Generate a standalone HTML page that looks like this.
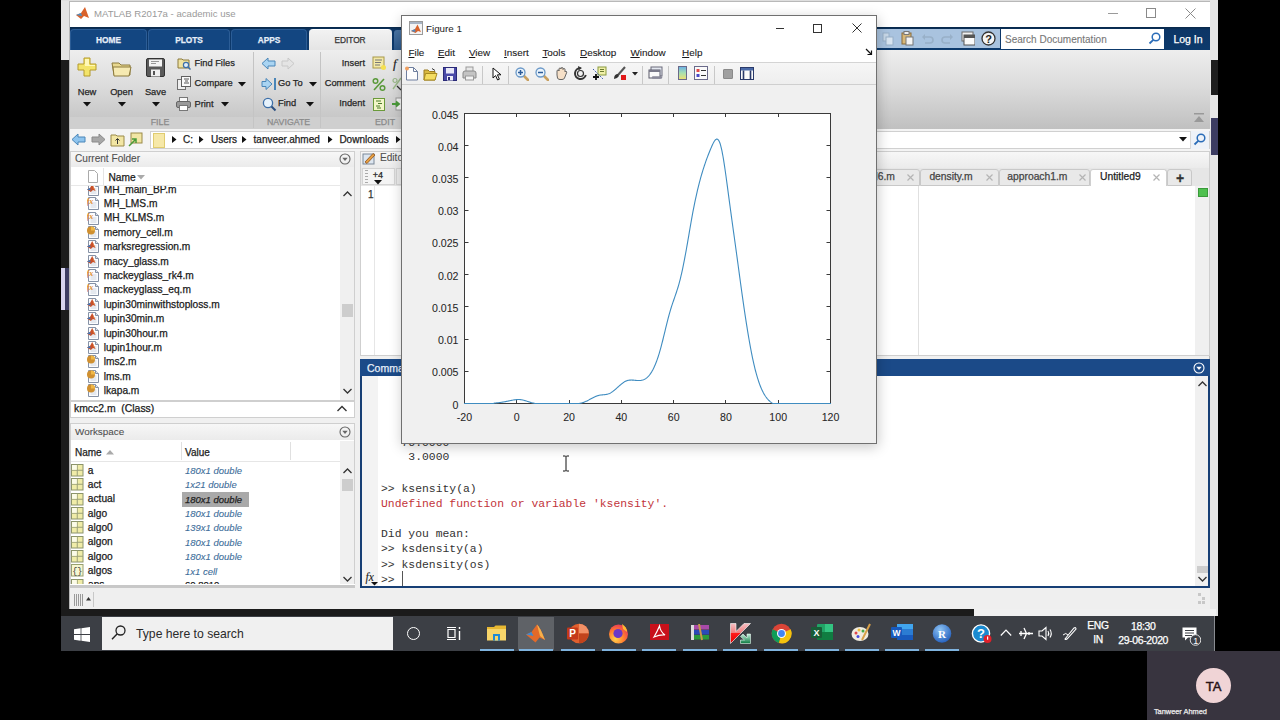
<!DOCTYPE html>
<html><head><meta charset="utf-8">
<style>
*{margin:0;padding:0;box-sizing:border-box}
html,body{width:1280px;height:720px;overflow:hidden;background:#000;font-family:"Liberation Sans",sans-serif;}
.a{position:absolute}
.t{position:absolute;white-space:nowrap;line-height:1;-webkit-text-stroke:0.25px currentColor}
</style></head><body>
<div class="a" style="left:0px;top:0px;width:1280px;height:720px;background:#000"></div>
<div class="a" style="left:61px;top:0px;width:8px;height:60px;background:#e4e4e4"></div>
<div class="a" style="left:61px;top:0px;width:1157px;height:1px;background:#dedede"></div>
<div class="a" style="left:61px;top:60px;width:8px;height:556px;background:#1c1c1c"></div>
<div class="a" style="left:61px;top:268px;width:4px;height:42px;background:#d6d3ee"></div>
<div class="a" style="left:65px;top:268px;width:4px;height:42px;background:#3c3c62"></div>
<div class="a" style="left:1210px;top:0px;width:8px;height:616px;background:#e6e6e6"></div>
<div class="a" style="left:1211px;top:60px;width:7px;height:35px;background:#1e1e1e"></div>
<div class="a" style="left:1211px;top:118px;width:7px;height:37px;background:#3c3c62"></div>
<div class="a" style="left:69px;top:1px;width:1141px;height:610px;background:#f0f0f0;border:1px solid #b8b8b8"></div>
<div class="a" style="left:70px;top:2px;width:1140px;height:25px;background:#fff"></div>
<svg class="a" style="left:76px;top:7px" width="13" height="13" viewBox="0 0 13 13"><path d="M0 8 L5 6 L9 0 L13 11 L8 9 L5 12 Z" fill="#d9622b"/><path d="M0 8 L5 6 L6 9 Z" fill="#4a90c8"/></svg>
<div class="t" style="left:94px;top:9.20px;font-size:9.6px;color:#9a9a9a;-webkit-text-stroke:0">MATLAB R2017a - academic use</div>
<div class="a" style="left:1108px;top:13px;width:10px;height:1px;background:#9a9a9a"></div>
<div class="a" style="left:1146px;top:8px;width:10px;height:10px;border:1px solid #8a8a8a"></div>
<svg class="a" style="left:1185px;top:8px" width="11" height="11" viewBox="0 0 11 11"><path d="M0.5 0.5L10.5 10.5M10.5 0.5L0.5 10.5" stroke="#8a8a8a" stroke-width="1"/></svg>
<div class="a" style="left:70px;top:27px;width:1140px;height:23px;background:linear-gradient(#082848 0,#0c3566 3px,#0d3a6c 100%)"></div>
<div class="a" style="left:70px;top:29px;width:77px;height:21px;background:#134681;border:1px solid #2c5d96;border-bottom:none;border-radius:4px 4px 0 0"></div>
<div class="t" style="left:-191.5px;width:600px;text-align:center;top:35.85px;font-size:8.3px;color:#e6eef8;font-weight:bold">HOME</div>
<div class="a" style="left:148px;top:29px;width:82px;height:21px;background:#134681;border:1px solid #2c5d96;border-bottom:none;border-radius:4px 4px 0 0"></div>
<div class="t" style="left:-111.0px;width:600px;text-align:center;top:35.85px;font-size:8.3px;color:#e6eef8;font-weight:bold">PLOTS</div>
<div class="a" style="left:231px;top:29px;width:76px;height:21px;background:#134681;border:1px solid #2c5d96;border-bottom:none;border-radius:4px 4px 0 0"></div>
<div class="t" style="left:-31.0px;width:600px;text-align:center;top:35.85px;font-size:8.3px;color:#e6eef8;font-weight:bold">APPS</div>
<div class="a" style="left:309px;top:29px;width:83px;height:22px;background:linear-gradient(#f2f2f2,#e4e4e4);border-radius:4px 4px 0 0;border-top:1px solid #fff"></div>
<div class="t" style="left:50px;width:600px;text-align:center;top:35.55px;font-size:8.3px;color:#333;">EDITOR</div>
<div class="a" style="left:394px;top:30px;width:10px;height:20px;background:linear-gradient(#4a74a4,#2a5688);border-radius:3px 0 0 0"></div>
<div class="a" style="left:870px;top:29px;width:130px;height:19px;background:#a9c3df"></div>
<div class="a" style="left:1001px;top:29px;width:163px;height:20px;background:#fff"></div>
<div class="t" style="left:1005px;top:34.50px;font-size:10px;color:#777;-webkit-text-stroke:0.1px">Search Documentation</div>
<svg class="a" style="left:1148px;top:32px" width="13" height="13" viewBox="0 0 13 13"><circle cx="8" cy="5" r="3.8" fill="none" stroke="#2a6cb8" stroke-width="1.5"/><path d="M5.3 7.8L1.5 11.5" stroke="#2a6cb8" stroke-width="1.8"/></svg>
<div class="t" style="left:888px;width:600px;text-align:center;top:33.75px;font-size:10.5px;color:#fff;">Log In</div>
<div class="a" style="left:70px;top:50px;width:1140px;height:79px;background:linear-gradient(#eeeeee 0%,#dcdcdc 45%,#c0c0c0 100%)"></div>
<div class="a" style="left:70px;top:117px;width:335px;height:12px;background:#cfcfcf"></div>
<div class="a" style="left:253px;top:52px;width:1px;height:76px;background:#c4c4c4"></div>
<div class="a" style="left:320px;top:52px;width:1px;height:76px;background:#c4c4c4"></div>
<div class="a" style="left:70px;top:129px;width:1140px;height:22px;background:#f4f4f4"></div>
<div class="a" style="left:150px;top:131px;width:1060px;height:18px;background:#fff;border:1px solid #d0d0d0"></div>
<div class="a" style="left:70px;top:151px;width:285px;height:250px;background:#fff;border:1px solid #cfcfcf"></div>
<div class="a" style="left:71px;top:152px;width:283px;height:15px;background:linear-gradient(#f7f7f7,#ebebeb)"></div>
<div class="t" style="left:75px;top:153.95px;font-size:10.1px;color:#505050;-webkit-text-stroke:0.1px">Current Folder</div>
<div class="a" style="left:340px;top:167px;width:14px;height:233px;background:#f0f0f0"></div>
<div class="t" style="left:103.7px;top:184.70px;font-size:10.2px;color:#1a1a1a;">MH_main_BP.m</div>
<svg class="a" style="left:87px;top:183px" width="13" height="13" viewBox="0 0 13 13"><path d="M1.5 0.5H8.5L11.5 3.5V12.5H1.5Z" fill="#fbfcfe" stroke="#8692a6"/><path d="M8.5 0.5V3.5H11.5" fill="#dde2ea" stroke="#8692a6"/><path d="M3.5 6H9.5M3.5 8H9.5M3.5 10H9.5" stroke="#c4ccd8" stroke-width=".8"/><path d="M0 6.5L3 5L5.2 1L8.5 8L6 7L3.8 9Z" fill="#c8502a"/><path d="M5.2 1L8.5 8L6.5 5.5Z" fill="#e8884a"/><path d="M0 6.5L3 5L3.8 7.5Z" fill="#3a78c0"/></svg>
<div class="t" style="left:103.7px;top:199.08px;font-size:10.2px;color:#1a1a1a;">MH_LMS.m</div>
<svg class="a" style="left:87px;top:197px" width="13" height="13" viewBox="0 0 13 13"><path d="M1.5 0.5H8.5L11.5 3.5V12.5H1.5Z" fill="#fbfcfe" stroke="#8692a6"/><path d="M8.5 0.5V3.5H11.5" fill="#dde2ea" stroke="#8692a6"/><path d="M3.5 6H9.5M3.5 8H9.5M3.5 10H9.5" stroke="#c4ccd8" stroke-width=".8"/><text x="-0.5" y="6.5" font-family="Liberation Serif" font-style="italic" font-weight="bold" font-size="8" fill="#e2902a">fx</text></svg>
<div class="t" style="left:103.7px;top:213.46px;font-size:10.2px;color:#1a1a1a;">MH_KLMS.m</div>
<svg class="a" style="left:87px;top:212px" width="13" height="13" viewBox="0 0 13 13"><path d="M1.5 0.5H8.5L11.5 3.5V12.5H1.5Z" fill="#fbfcfe" stroke="#8692a6"/><path d="M8.5 0.5V3.5H11.5" fill="#dde2ea" stroke="#8692a6"/><path d="M3.5 6H9.5M3.5 8H9.5M3.5 10H9.5" stroke="#c4ccd8" stroke-width=".8"/><text x="-0.5" y="6.5" font-family="Liberation Serif" font-style="italic" font-weight="bold" font-size="8" fill="#e2902a">fx</text></svg>
<div class="t" style="left:103.7px;top:227.84px;font-size:10.2px;color:#1a1a1a;">memory_cell.m</div>
<svg class="a" style="left:87px;top:226px" width="13" height="13" viewBox="0 0 13 13"><path d="M1.5 0.5H8.5L11.5 3.5V12.5H1.5Z" fill="#fbfcfe" stroke="#8692a6"/><path d="M8.5 0.5V3.5H11.5" fill="#dde2ea" stroke="#8692a6"/><path d="M3.5 6H9.5M3.5 8H9.5M3.5 10H9.5" stroke="#c4ccd8" stroke-width=".8"/><circle cx="4" cy="4.5" r="4" fill="#d09030"/><path d="M4 0.5A4 4 0 0 1 8 4.5L4 4.5Z" fill="#f0b848"/></svg>
<div class="t" style="left:103.7px;top:242.22px;font-size:10.2px;color:#1a1a1a;">marksregression.m</div>
<svg class="a" style="left:87px;top:240px" width="13" height="13" viewBox="0 0 13 13"><path d="M1.5 0.5H8.5L11.5 3.5V12.5H1.5Z" fill="#fbfcfe" stroke="#8692a6"/><path d="M8.5 0.5V3.5H11.5" fill="#dde2ea" stroke="#8692a6"/><path d="M3.5 6H9.5M3.5 8H9.5M3.5 10H9.5" stroke="#c4ccd8" stroke-width=".8"/><path d="M0 6.5L3 5L5.2 1L8.5 8L6 7L3.8 9Z" fill="#c8502a"/><path d="M5.2 1L8.5 8L6.5 5.5Z" fill="#e8884a"/><path d="M0 6.5L3 5L3.8 7.5Z" fill="#3a78c0"/></svg>
<div class="t" style="left:103.7px;top:256.60px;font-size:10.2px;color:#1a1a1a;">macy_glass.m</div>
<svg class="a" style="left:87px;top:255px" width="13" height="13" viewBox="0 0 13 13"><path d="M1.5 0.5H8.5L11.5 3.5V12.5H1.5Z" fill="#fbfcfe" stroke="#8692a6"/><path d="M8.5 0.5V3.5H11.5" fill="#dde2ea" stroke="#8692a6"/><path d="M3.5 6H9.5M3.5 8H9.5M3.5 10H9.5" stroke="#c4ccd8" stroke-width=".8"/><path d="M0 6.5L3 5L5.2 1L8.5 8L6 7L3.8 9Z" fill="#c8502a"/><path d="M5.2 1L8.5 8L6.5 5.5Z" fill="#e8884a"/><path d="M0 6.5L3 5L3.8 7.5Z" fill="#3a78c0"/></svg>
<div class="t" style="left:103.7px;top:270.98px;font-size:10.2px;color:#1a1a1a;">mackeyglass_rk4.m</div>
<svg class="a" style="left:87px;top:269px" width="13" height="13" viewBox="0 0 13 13"><path d="M1.5 0.5H8.5L11.5 3.5V12.5H1.5Z" fill="#fbfcfe" stroke="#8692a6"/><path d="M8.5 0.5V3.5H11.5" fill="#dde2ea" stroke="#8692a6"/><path d="M3.5 6H9.5M3.5 8H9.5M3.5 10H9.5" stroke="#c4ccd8" stroke-width=".8"/><text x="-0.5" y="6.5" font-family="Liberation Serif" font-style="italic" font-weight="bold" font-size="8" fill="#e2902a">fx</text></svg>
<div class="t" style="left:103.7px;top:285.36px;font-size:10.2px;color:#1a1a1a;">mackeyglass_eq.m</div>
<svg class="a" style="left:87px;top:283px" width="13" height="13" viewBox="0 0 13 13"><path d="M1.5 0.5H8.5L11.5 3.5V12.5H1.5Z" fill="#fbfcfe" stroke="#8692a6"/><path d="M8.5 0.5V3.5H11.5" fill="#dde2ea" stroke="#8692a6"/><path d="M3.5 6H9.5M3.5 8H9.5M3.5 10H9.5" stroke="#c4ccd8" stroke-width=".8"/><text x="-0.5" y="6.5" font-family="Liberation Serif" font-style="italic" font-weight="bold" font-size="8" fill="#e2902a">fx</text></svg>
<div class="t" style="left:103.7px;top:299.74px;font-size:10.2px;color:#1a1a1a;">lupin30minwithstoploss.m</div>
<svg class="a" style="left:87px;top:298px" width="13" height="13" viewBox="0 0 13 13"><path d="M1.5 0.5H8.5L11.5 3.5V12.5H1.5Z" fill="#fbfcfe" stroke="#8692a6"/><path d="M8.5 0.5V3.5H11.5" fill="#dde2ea" stroke="#8692a6"/><path d="M3.5 6H9.5M3.5 8H9.5M3.5 10H9.5" stroke="#c4ccd8" stroke-width=".8"/><path d="M0 6.5L3 5L5.2 1L8.5 8L6 7L3.8 9Z" fill="#c8502a"/><path d="M5.2 1L8.5 8L6.5 5.5Z" fill="#e8884a"/><path d="M0 6.5L3 5L3.8 7.5Z" fill="#3a78c0"/></svg>
<div class="t" style="left:103.7px;top:314.12px;font-size:10.2px;color:#1a1a1a;">lupin30min.m</div>
<svg class="a" style="left:87px;top:312px" width="13" height="13" viewBox="0 0 13 13"><path d="M1.5 0.5H8.5L11.5 3.5V12.5H1.5Z" fill="#fbfcfe" stroke="#8692a6"/><path d="M8.5 0.5V3.5H11.5" fill="#dde2ea" stroke="#8692a6"/><path d="M3.5 6H9.5M3.5 8H9.5M3.5 10H9.5" stroke="#c4ccd8" stroke-width=".8"/><path d="M0 6.5L3 5L5.2 1L8.5 8L6 7L3.8 9Z" fill="#c8502a"/><path d="M5.2 1L8.5 8L6.5 5.5Z" fill="#e8884a"/><path d="M0 6.5L3 5L3.8 7.5Z" fill="#3a78c0"/></svg>
<div class="t" style="left:103.7px;top:328.50px;font-size:10.2px;color:#1a1a1a;">lupin30hour.m</div>
<svg class="a" style="left:87px;top:327px" width="13" height="13" viewBox="0 0 13 13"><path d="M1.5 0.5H8.5L11.5 3.5V12.5H1.5Z" fill="#fbfcfe" stroke="#8692a6"/><path d="M8.5 0.5V3.5H11.5" fill="#dde2ea" stroke="#8692a6"/><path d="M3.5 6H9.5M3.5 8H9.5M3.5 10H9.5" stroke="#c4ccd8" stroke-width=".8"/><path d="M0 6.5L3 5L5.2 1L8.5 8L6 7L3.8 9Z" fill="#c8502a"/><path d="M5.2 1L8.5 8L6.5 5.5Z" fill="#e8884a"/><path d="M0 6.5L3 5L3.8 7.5Z" fill="#3a78c0"/></svg>
<div class="t" style="left:103.7px;top:342.88px;font-size:10.2px;color:#1a1a1a;">lupin1hour.m</div>
<svg class="a" style="left:87px;top:341px" width="13" height="13" viewBox="0 0 13 13"><path d="M1.5 0.5H8.5L11.5 3.5V12.5H1.5Z" fill="#fbfcfe" stroke="#8692a6"/><path d="M8.5 0.5V3.5H11.5" fill="#dde2ea" stroke="#8692a6"/><path d="M3.5 6H9.5M3.5 8H9.5M3.5 10H9.5" stroke="#c4ccd8" stroke-width=".8"/><path d="M0 6.5L3 5L5.2 1L8.5 8L6 7L3.8 9Z" fill="#c8502a"/><path d="M5.2 1L8.5 8L6.5 5.5Z" fill="#e8884a"/><path d="M0 6.5L3 5L3.8 7.5Z" fill="#3a78c0"/></svg>
<div class="t" style="left:103.7px;top:357.26px;font-size:10.2px;color:#1a1a1a;">lms2.m</div>
<svg class="a" style="left:87px;top:355px" width="13" height="13" viewBox="0 0 13 13"><path d="M1.5 0.5H8.5L11.5 3.5V12.5H1.5Z" fill="#fbfcfe" stroke="#8692a6"/><path d="M8.5 0.5V3.5H11.5" fill="#dde2ea" stroke="#8692a6"/><path d="M3.5 6H9.5M3.5 8H9.5M3.5 10H9.5" stroke="#c4ccd8" stroke-width=".8"/><circle cx="4" cy="4.5" r="4" fill="#d09030"/><path d="M4 0.5A4 4 0 0 1 8 4.5L4 4.5Z" fill="#f0b848"/></svg>
<div class="t" style="left:103.7px;top:371.64px;font-size:10.2px;color:#1a1a1a;">lms.m</div>
<svg class="a" style="left:87px;top:370px" width="13" height="13" viewBox="0 0 13 13"><path d="M1.5 0.5H8.5L11.5 3.5V12.5H1.5Z" fill="#fbfcfe" stroke="#8692a6"/><path d="M8.5 0.5V3.5H11.5" fill="#dde2ea" stroke="#8692a6"/><path d="M3.5 6H9.5M3.5 8H9.5M3.5 10H9.5" stroke="#c4ccd8" stroke-width=".8"/><circle cx="4" cy="4.5" r="4" fill="#d09030"/><path d="M4 0.5A4 4 0 0 1 8 4.5L4 4.5Z" fill="#f0b848"/></svg>
<div class="t" style="left:103.7px;top:386.02px;font-size:10.2px;color:#1a1a1a;">lkapa.m</div>
<svg class="a" style="left:87px;top:384px" width="13" height="13" viewBox="0 0 13 13"><path d="M1.5 0.5H8.5L11.5 3.5V12.5H1.5Z" fill="#fbfcfe" stroke="#8692a6"/><path d="M8.5 0.5V3.5H11.5" fill="#dde2ea" stroke="#8692a6"/><path d="M3.5 6H9.5M3.5 8H9.5M3.5 10H9.5" stroke="#c4ccd8" stroke-width=".8"/><circle cx="4" cy="4.5" r="4" fill="#d09030"/><path d="M4 0.5A4 4 0 0 1 8 4.5L4 4.5Z" fill="#f0b848"/></svg>
<div class="a" style="left:71px;top:167px;width:269px;height:19px;background:#fff;border-bottom:1px solid #e8e8e8"></div>
<div class="a" style="left:103px;top:168px;width:1px;height:17px;background:#e4e4e4"></div>
<div class="t" style="left:108.5px;top:172.65px;font-size:10.2px;color:#1a1a1a;">Name</div>
<div class="a" style="left:70px;top:401px;width:285px;height:17px;background:#fff;border:1px solid #cfcfcf"></div>
<div class="t" style="left:74px;top:404.20px;font-size:10.4px;color:#1a1a1a;">kmcc2.m&nbsp; (Class)</div>
<div class="a" style="left:70px;top:423px;width:285px;height:164px;background:#fff;border:1px solid #cfcfcf"></div>
<div class="a" style="left:71px;top:424px;width:283px;height:16px;background:linear-gradient(#f7f7f7,#ebebeb)"></div>
<div class="t" style="left:75px;top:427.05px;font-size:9.9px;color:#505050;-webkit-text-stroke:0.1px">Workspace</div>
<div class="a" style="left:71px;top:440px;width:283px;height:22px;background:#fff;border-bottom:1px solid #e6e6e6"></div>
<div class="t" style="left:75px;top:448.00px;font-size:10px;color:#222;">Name</div>
<div class="t" style="left:185px;top:448.00px;font-size:10px;color:#222;">Value</div>
<div class="a" style="left:181px;top:442px;width:1px;height:18px;background:#e0e0e0"></div>
<div class="a" style="left:290px;top:442px;width:1px;height:18px;background:#e0e0e0"></div>
<div class="t" style="left:87.8px;top:465.70px;font-size:10.2px;color:#1a1a1a;">a</div>
<svg class="a" style="left:71px;top:464px" width="13" height="13" viewBox="0 0 13 13"><rect x="0.5" y="0.5" width="11.5" height="11.5" fill="#f0eca8" stroke="#8c946a"/><path d="M6.25 0.5V12M0.5 6.25H12" stroke="#9aa078" stroke-width="1"/><rect x="1" y="1" width="4.8" height="4.8" fill="#fbfbe8"/></svg>
<div class="t" style="left:185px;top:466.05px;font-size:9.5px;color:#3d6d9a;font-style:italic;-webkit-text-stroke:0.1px">180x1 double</div>
<div class="t" style="left:87.8px;top:480.05px;font-size:10.2px;color:#1a1a1a;">act</div>
<svg class="a" style="left:71px;top:478px" width="13" height="13" viewBox="0 0 13 13"><rect x="0.5" y="0.5" width="11.5" height="11.5" fill="#f0eca8" stroke="#8c946a"/><path d="M6.25 0.5V12M0.5 6.25H12" stroke="#9aa078" stroke-width="1"/><rect x="1" y="1" width="4.8" height="4.8" fill="#fbfbe8"/></svg>
<div class="t" style="left:185px;top:480.40px;font-size:9.5px;color:#3d6d9a;font-style:italic;-webkit-text-stroke:0.1px">1x21 double</div>
<div class="t" style="left:87.8px;top:494.40px;font-size:10.2px;color:#1a1a1a;">actual</div>
<svg class="a" style="left:71px;top:493px" width="13" height="13" viewBox="0 0 13 13"><rect x="0.5" y="0.5" width="11.5" height="11.5" fill="#f0eca8" stroke="#8c946a"/><path d="M6.25 0.5V12M0.5 6.25H12" stroke="#9aa078" stroke-width="1"/><rect x="1" y="1" width="4.8" height="4.8" fill="#fbfbe8"/></svg>
<div class="a" style="left:182px;top:492px;width:67px;height:15px;background:#a9a9a9"></div>
<div class="t" style="left:185px;top:494.75px;font-size:9.5px;color:#222;font-style:italic">180x1 double</div>
<div class="t" style="left:87.8px;top:508.75px;font-size:10.2px;color:#1a1a1a;">algo</div>
<svg class="a" style="left:71px;top:507px" width="13" height="13" viewBox="0 0 13 13"><rect x="0.5" y="0.5" width="11.5" height="11.5" fill="#f0eca8" stroke="#8c946a"/><path d="M6.25 0.5V12M0.5 6.25H12" stroke="#9aa078" stroke-width="1"/><rect x="1" y="1" width="4.8" height="4.8" fill="#fbfbe8"/></svg>
<div class="t" style="left:185px;top:509.10px;font-size:9.5px;color:#3d6d9a;font-style:italic;-webkit-text-stroke:0.1px">180x1 double</div>
<div class="t" style="left:87.8px;top:523.10px;font-size:10.2px;color:#1a1a1a;">algo0</div>
<svg class="a" style="left:71px;top:521px" width="13" height="13" viewBox="0 0 13 13"><rect x="0.5" y="0.5" width="11.5" height="11.5" fill="#f0eca8" stroke="#8c946a"/><path d="M6.25 0.5V12M0.5 6.25H12" stroke="#9aa078" stroke-width="1"/><rect x="1" y="1" width="4.8" height="4.8" fill="#fbfbe8"/></svg>
<div class="t" style="left:185px;top:523.45px;font-size:9.5px;color:#3d6d9a;font-style:italic;-webkit-text-stroke:0.1px">139x1 double</div>
<div class="t" style="left:87.8px;top:537.45px;font-size:10.2px;color:#1a1a1a;">algon</div>
<svg class="a" style="left:71px;top:536px" width="13" height="13" viewBox="0 0 13 13"><rect x="0.5" y="0.5" width="11.5" height="11.5" fill="#f0eca8" stroke="#8c946a"/><path d="M6.25 0.5V12M0.5 6.25H12" stroke="#9aa078" stroke-width="1"/><rect x="1" y="1" width="4.8" height="4.8" fill="#fbfbe8"/></svg>
<div class="t" style="left:185px;top:537.80px;font-size:9.5px;color:#3d6d9a;font-style:italic;-webkit-text-stroke:0.1px">180x1 double</div>
<div class="t" style="left:87.8px;top:551.80px;font-size:10.2px;color:#1a1a1a;">algoo</div>
<svg class="a" style="left:71px;top:550px" width="13" height="13" viewBox="0 0 13 13"><rect x="0.5" y="0.5" width="11.5" height="11.5" fill="#f0eca8" stroke="#8c946a"/><path d="M6.25 0.5V12M0.5 6.25H12" stroke="#9aa078" stroke-width="1"/><rect x="1" y="1" width="4.8" height="4.8" fill="#fbfbe8"/></svg>
<div class="t" style="left:185px;top:552.15px;font-size:9.5px;color:#3d6d9a;font-style:italic;-webkit-text-stroke:0.1px">180x1 double</div>
<div class="t" style="left:87.8px;top:566.15px;font-size:10.2px;color:#1a1a1a;">algos</div>
<svg class="a" style="left:71px;top:564px" width="13" height="13" viewBox="0 0 13 13"><rect x="0.5" y="0.5" width="11.5" height="11.5" fill="#f6f6d0" stroke="#98a070"/><text x="6.25" y="9.5" text-anchor="middle" font-family="Liberation Mono" font-size="8.5" fill="#333">{}</text></svg>
<div class="t" style="left:185px;top:566.50px;font-size:9.5px;color:#3d6d9a;font-style:italic;-webkit-text-stroke:0.1px">1x1 cell</div>
<svg class="a" style="left:71px;top:579px" width="13" height="13" viewBox="0 0 13 13"><rect x="0.5" y="0.5" width="11.5" height="11.5" fill="#f0eca8" stroke="#8c946a"/><path d="M6.25 0.5V12M0.5 6.25H12" stroke="#9aa078" stroke-width="1"/><rect x="1" y="1" width="4.8" height="4.8" fill="#fbfbe8"/></svg>
<div class="t" style="left:88px;top:579.90px;font-size:10.2px;color:#1a1a1a;">ans</div>
<div class="t" style="left:185px;top:580.25px;font-size:9.5px;color:#222;">60.8010</div>
<div class="a" style="left:340px;top:441px;width:14px;height:145px;background:#f0f0f0"></div>
<div class="a" style="left:70px;top:584px;width:285px;height:4px;background:linear-gradient(#fff 0,#fff 1px,#c8c8c8 1px)"></div>
<div class="a" style="left:360px;top:151px;width:850px;height:205px;background:#fff;border:1px solid #cfcfcf"></div>
<div class="a" style="left:361px;top:152px;width:848px;height:16px;background:linear-gradient(#f7f7f7,#ebebeb)"></div>
<div class="t" style="left:380px;top:152.95px;font-size:10.1px;color:#505050;-webkit-text-stroke:0.1px">Editor</div>
<div class="a" style="left:361px;top:168px;width:848px;height:18px;background:#e6e6e6"></div>
<div class="a" style="left:1090px;top:169px;width:77px;height:17px;background:#fff;border:1px solid #cfcfcf;border-bottom:none;border-radius:3px 3px 0 0"></div>
<div class="a" style="left:870px;top:169px;width:50px;height:17px;background:#e9e9e9;border:1px solid #c8c8c8;border-radius:3px 3px 0 0"></div>
<div class="t" style="left:872px;top:172.15px;font-size:10.3px;color:#444;">d6.m</div>
<div class="a" style="left:920px;top:169px;width:79px;height:17px;background:#e9e9e9;border:1px solid #c8c8c8;border-radius:3px 3px 0 0"></div>
<div class="t" style="left:929.4px;top:172.15px;font-size:10.3px;color:#444;">density.m</div>
<div class="a" style="left:999px;top:169px;width:91px;height:17px;background:#e9e9e9;border:1px solid #c8c8c8;border-radius:3px 3px 0 0"></div>
<div class="t" style="left:1007.3px;top:172.15px;font-size:10.3px;color:#444;">approach1.m</div>
<div class="a" style="left:1167px;top:169px;width:25px;height:17px;background:#e9e9e9;border:1px solid #c8c8c8;border-radius:3px 3px 0 0"></div>
<div class="t" style="left:1100px;top:172.15px;font-size:10.3px;color:#222;">Untitled9</div>
<svg class="a" style="left:907.4px;top:174px" width="7" height="7" viewBox="0 0 7 7"><path d="M0.5 0.5L6.5 6.5M6.5 0.5L0.5 6.5" stroke="#b4b4b4" stroke-width="1.2"/></svg>
<svg class="a" style="left:985.7px;top:174px" width="7" height="7" viewBox="0 0 7 7"><path d="M0.5 0.5L6.5 6.5M6.5 0.5L0.5 6.5" stroke="#b4b4b4" stroke-width="1.2"/></svg>
<svg class="a" style="left:1078.5px;top:174px" width="7" height="7" viewBox="0 0 7 7"><path d="M0.5 0.5L6.5 6.5M6.5 0.5L0.5 6.5" stroke="#b4b4b4" stroke-width="1.2"/></svg>
<svg class="a" style="left:1153.0px;top:174px" width="7" height="7" viewBox="0 0 7 7"><path d="M0.5 0.5L6.5 6.5M6.5 0.5L0.5 6.5" stroke="#b4b4b4" stroke-width="1.2"/></svg>
<div class="t" style="left:880px;width:600px;text-align:center;top:170.50px;font-size:14px;color:#333;font-weight:bold">+</div>
<div class="a" style="left:361px;top:186px;width:557px;height:169px;background:#fff"></div>
<div class="a" style="left:918px;top:186px;width:1px;height:169px;background:#e0e0e0"></div>
<div class="a" style="left:374px;top:186px;width:1px;height:169px;background:#e6e6e6"></div>
<div class="a" style="left:1195px;top:186px;width:14px;height:169px;background:#f0f0f0"></div>
<div class="a" style="left:1198px;top:188px;width:10px;height:9px;background:#4fc04f;border:1px solid #3a9a3a"></div>
<div class="t" style="left:368px;top:190.00px;font-size:10px;color:#333;">1</div>
<div class="a" style="left:360px;top:359px;width:850px;height:229px;background:#fff;border:2px solid #173f75"></div>
<div class="a" style="left:362px;top:376px;width:16px;height:210px;background:#f3f3f3"></div>
<div class="a" style="left:360px;top:359px;width:850px;height:17px;background:#1b4a88"></div>
<div class="t" style="left:367px;top:362.75px;font-size:10.5px;color:#e8f0fa;">Command Window</div>
<div class="a" style="left:1195px;top:376px;width:13px;height:210px;background:#f0f0f0"></div>
<div class="t" style="left:381px;top:437.65px;font-size:11.4px;color:#333;font-family:'Liberation Mono',monospace;-webkit-text-stroke:0;">&nbsp;&nbsp;&nbsp;76.0000</div>
<div class="t" style="left:381px;top:452.45px;font-size:11.4px;color:#333;font-family:'Liberation Mono',monospace;-webkit-text-stroke:0;">&nbsp;&nbsp;&nbsp;&nbsp;3.0000</div>
<div class="t" style="left:381px;top:484.05px;font-size:11.4px;color:#333;font-family:'Liberation Mono',monospace;-webkit-text-stroke:0;">&gt;&gt; ksensity(a)</div>
<div class="t" style="left:381px;top:498.55px;font-size:11.4px;color:#c2343a;font-family:'Liberation Mono',monospace;-webkit-text-stroke:0;">Undefined function or variable 'ksensity'.</div>
<div class="t" style="left:381px;top:529.05px;font-size:11.4px;color:#333;font-family:'Liberation Mono',monospace;-webkit-text-stroke:0;">Did you mean:</div>
<div class="t" style="left:381px;top:544.25px;font-size:11.4px;color:#333;font-family:'Liberation Mono',monospace;-webkit-text-stroke:0;">&gt;&gt; ksdensity(a)</div>
<div class="t" style="left:381px;top:559.55px;font-size:11.4px;color:#333;font-family:'Liberation Mono',monospace;-webkit-text-stroke:0;">&gt;&gt; ksdensity(os)</div>
<div class="t" style="left:381px;top:574.75px;font-size:11.4px;color:#333;font-family:'Liberation Mono',monospace;-webkit-text-stroke:0;">&gt;&gt; </div>
<div class="a" style="left:402px;top:571px;width:1px;height:15px;background:#555"></div>
<div class="t" style="left:365.5px;top:571.75px;font-size:11.5px;color:#222;font-style:italic;font-family:'Liberation Serif';-webkit-text-stroke:0.1px">fx</div>
<svg class="a" style="left:371px;top:582px" width="7" height="4" viewBox="0 0 7 4"><path d="M0 0H7L3.5 3.5Z" fill="#111"/></svg>
<div class="a" style="left:70px;top:588px;width:1140px;height:22px;background:#efefef"></div>
<svg class="a" style="left:77px;top:57px" width="21" height="21" viewBox="0 0 21 21"><path d="M7 1H13V7H19V13H13V19H7V13H1V7H7Z" fill="#f3e46a" stroke="#b49a2c" stroke-width="1"/><path d="M8 2H12V8H18V9H8Z" fill="#fff8b8"/></svg>
<svg class="a" style="left:111px;top:61px" width="21" height="16" viewBox="0 0 21 16"><path d="M1 2H8L10 4H19V14H3Z" fill="#e8d890" stroke="#8c7a3c" stroke-width="1"/><path d="M2 6H20L18 15H3Z" fill="#f6eab2" stroke="#8c7a3c" stroke-width="1"/></svg>
<svg class="a" style="left:145px;top:57px" width="21" height="21" viewBox="0 0 21 21"><rect x="1.5" y="1.5" width="18" height="18" rx="1.5" fill="#5a5a5a" stroke="#333"/><rect x="4" y="2.5" width="13" height="7" fill="#f4f4f4"/><path d="M6 4.5H14M6 6.5H11" stroke="#999"/><rect x="6" y="12.5" width="9" height="7" fill="#f0f0f0"/><rect x="8" y="14" width="2" height="4" fill="#555"/></svg>
<div class="t" style="left:-213px;width:600px;text-align:center;top:87.85px;font-size:9.3px;color:#262626;">New</div>
<svg class="a" style="left:83px;top:102px" width="8" height="5" viewBox="0 0 8 5"><path d="M0 0H8L4 4.5Z" fill="#111"/></svg>
<div class="t" style="left:-178.5px;width:600px;text-align:center;top:87.85px;font-size:9.3px;color:#262626;">Open</div>
<svg class="a" style="left:117.5px;top:102px" width="8" height="5" viewBox="0 0 8 5"><path d="M0 0H8L4 4.5Z" fill="#111"/></svg>
<div class="t" style="left:-144.5px;width:600px;text-align:center;top:87.85px;font-size:9.3px;color:#262626;">Save</div>
<svg class="a" style="left:151.5px;top:102px" width="8" height="5" viewBox="0 0 8 5"><path d="M0 0H8L4 4.5Z" fill="#111"/></svg>
<svg class="a" style="left:177px;top:56px" width="14" height="14" viewBox="0 0 14 14"><path d="M1 3H5L6 4H12V12H1Z" fill="#efe2a0" stroke="#8c7a3c"/><circle cx="9" cy="9" r="2.6" fill="#dfeefa" stroke="#3d6fa8" stroke-width="1.2"/><path d="M11 11L13.5 13.5" stroke="#3d6fa8" stroke-width="1.5"/></svg>
<svg class="a" style="left:177px;top:76px" width="14" height="15" viewBox="0 0 14 15"><rect x="0.5" y="3.5" width="8" height="10" fill="#f0f0f0" stroke="#707070"/><rect x="4.5" y="0.5" width="9" height="10" fill="#fafafa" stroke="#606060"/><path d="M7 3H12M8 5H11M7 7H12" stroke="#555"/></svg>
<svg class="a" style="left:176px;top:97px" width="15" height="14" viewBox="0 0 15 14"><rect x="3.5" y="0.5" width="8" height="5" fill="#fafafa" stroke="#777"/><rect x="0.5" y="4.5" width="14" height="6" rx="1.5" fill="#9a9a9a" stroke="#666"/><rect x="3.5" y="8.5" width="8" height="5" fill="#fff" stroke="#777"/></svg>
<div class="t" style="left:194.5px;top:58.65px;font-size:9.3px;color:#262626;">Find Files</div>
<div class="t" style="left:194.5px;top:79.35px;font-size:9.3px;color:#262626;">Compare</div>
<div class="t" style="left:194.5px;top:99.55px;font-size:9.3px;color:#262626;">Print</div>
<svg class="a" style="left:238px;top:82px" width="8" height="5" viewBox="0 0 8 5"><path d="M0 0H8L4 4.5Z" fill="#111"/></svg>
<svg class="a" style="left:221px;top:102px" width="8" height="5" viewBox="0 0 8 5"><path d="M0 0H8L4 4.5Z" fill="#111"/></svg>
<div class="t" style="left:-140px;width:600px;text-align:center;top:118.00px;font-size:8.8px;color:#8a8a8a;">FILE</div>
<svg class="a" style="left:261px;top:57px" width="15" height="13" viewBox="0 0 15 13"><path d="M1 6.5L7 1V4H14V9H7V12Z" fill="#a9d4f2" stroke="#4a86b8" stroke-width="1"/></svg>
<svg class="a" style="left:281px;top:57px" width="14" height="13" viewBox="0 0 14 13"><path d="M13 6.5L7 1V4H1V9H7V12Z" fill="#e4e4e4" stroke="#c8c8c8" stroke-width="1"/></svg>
<svg class="a" style="left:261px;top:77px" width="17" height="14" viewBox="0 0 17 14"><path d="M11 7L5 1.5V4.5H1V9.5H5V12.5Z" fill="#a9d4f2" stroke="#4a86b8"/><rect x="13" y="1" width="2" height="12" fill="#4a86b8"/></svg>
<div class="t" style="left:278px;top:79.35px;font-size:9.3px;color:#262626;">Go To</div>
<svg class="a" style="left:309px;top:82px" width="8" height="5" viewBox="0 0 8 5"><path d="M0 0H8L4 4.5Z" fill="#111"/></svg>
<svg class="a" style="left:262px;top:97px" width="15" height="15" viewBox="0 0 15 15"><circle cx="6" cy="6" r="4.6" fill="#e6f2fc" stroke="#3d6fa8" stroke-width="1.3"/><path d="M9.5 9.5L13.5 13.5" stroke="#2b4f80" stroke-width="2"/></svg>
<div class="t" style="left:278px;top:99.35px;font-size:9.3px;color:#262626;">Find</div>
<svg class="a" style="left:306px;top:102px" width="8" height="5" viewBox="0 0 8 5"><path d="M0 0H8L4 4.5Z" fill="#111"/></svg>
<div class="t" style="left:267px;top:118.00px;font-size:8.8px;color:#8a8a8a;">NAVIGATE</div>
<div class="t" style="left:-235px;width:600px;text-align:right;top:58.65px;font-size:9.3px;color:#262626;">Insert</div>
<div class="t" style="left:-235px;width:600px;text-align:right;top:79.35px;font-size:9.3px;color:#262626;">Comment</div>
<div class="t" style="left:-235px;width:600px;text-align:right;top:99.35px;font-size:9.3px;color:#262626;">Indent</div>
<svg class="a" style="left:372px;top:56px" width="15" height="15" viewBox="0 0 15 15"><rect x="1" y="1" width="11" height="11" fill="#f3e9a8" stroke="#a89848"/><path d="M3 4H10M3 6.5H9M3 9H8" stroke="#777"/><circle cx="11.5" cy="11.5" r="2.5" fill="#f5e050"/></svg>
<svg class="a" style="left:372px;top:77px" width="15" height="15" viewBox="0 0 15 15"><path d="M2 13L12 2" stroke="#5a9a3a" stroke-width="1.6"/><circle cx="3.5" cy="4" r="2.3" fill="none" stroke="#5a9a3a" stroke-width="1.5"/><circle cx="10.5" cy="11" r="2.3" fill="none" stroke="#5a9a3a" stroke-width="1.5"/></svg>
<svg class="a" style="left:372px;top:97px" width="15" height="15" viewBox="0 0 15 15"><rect x="1.5" y="1.5" width="11" height="12" fill="#f2f6c8" stroke="#6a9a3a"/><path d="M4 4H9M6 6.5H10M4 9H8M5 11H9" stroke="#4a7a2a"/></svg>
<div class="t" style="left:375px;top:118.00px;font-size:8.8px;color:#8a8a8a;">EDIT</div>
<div class="t" style="left:393px;top:56.50px;font-size:13px;color:#222;font-style:italic;font-family:'Liberation Serif';-webkit-text-stroke:0.2px">f</div>
<svg class="a" style="left:392px;top:77px" width="10" height="14" viewBox="0 0 10 14"><circle cx="3" cy="3.5" r="2" fill="none" stroke="#9ab888" stroke-width="1.2"/><path d="M1 12L9 1" stroke="#9ab888" stroke-width="1.4"/><path d="M5 9L9 13" stroke="#333" stroke-width="1.2"/></svg>
<svg class="a" style="left:392px;top:97px" width="10" height="14" viewBox="0 0 10 14"><rect x="4" y="1" width="8" height="12" fill="#f4f4f4" stroke="#999"/><path d="M0 7H6M4 4.5L7 7L4 9.5" stroke="#4a9a3a" stroke-width="1.8" fill="none"/></svg>
<svg class="a" style="left:71px;top:133px" width="15" height="13" viewBox="0 0 15 13"><path d="M1 6.5L7 1V4H14V9H7V12Z" fill="#8ec4ee" stroke="#4a86b8"/></svg>
<svg class="a" style="left:91px;top:133px" width="15" height="13" viewBox="0 0 15 13"><path d="M14 6.5L8 1V4H1V9H8V12Z" fill="#a8a8a8" stroke="#8a8a8a"/></svg>
<svg class="a" style="left:110px;top:132px" width="15" height="15" viewBox="0 0 15 15"><path d="M1 3H6L7 4H14V14H1Z" fill="#f2e6a4" stroke="#9a8a48"/><path d="M7.5 12V7M5.5 8.5L7.5 6.5L9.5 8.5" stroke="#333" fill="none"/></svg>
<svg class="a" style="left:128px;top:132px" width="15" height="15" viewBox="0 0 15 15"><rect x="3" y="1" width="11" height="10" fill="#f2e6a4" stroke="#9a8a48"/><path d="M1 14L8 7M4 7H8V11" stroke="#4a9a3a" stroke-width="1.5" fill="none"/></svg>
<svg class="a" style="left:153px;top:133px" width="12" height="15" viewBox="0 0 12 15"><rect x="0.5" y="0.5" width="11" height="14" fill="#f6e8a8" stroke="#e0cc70"/></svg>
<svg class="a" style="left:172px;top:136px" width="5" height="7" viewBox="0 0 5 7"><path d="M0 0L4.5 3.5L0 7Z" fill="#111"/></svg>
<svg class="a" style="left:199px;top:136px" width="5" height="7" viewBox="0 0 5 7"><path d="M0 0L4.5 3.5L0 7Z" fill="#111"/></svg>
<svg class="a" style="left:242px;top:136px" width="5" height="7" viewBox="0 0 5 7"><path d="M0 0L4.5 3.5L0 7Z" fill="#111"/></svg>
<svg class="a" style="left:327.6px;top:136px" width="5" height="7" viewBox="0 0 5 7"><path d="M0 0L4.5 3.5L0 7Z" fill="#111"/></svg>
<svg class="a" style="left:396px;top:136px" width="5" height="7" viewBox="0 0 5 7"><path d="M0 0L4.5 3.5L0 7Z" fill="#111"/></svg>
<div class="t" style="left:183px;top:135.00px;font-size:10px;color:#222;">C:</div>
<div class="t" style="left:211px;top:135.00px;font-size:10px;color:#222;">Users</div>
<div class="t" style="left:253.6px;top:135.00px;font-size:10px;color:#222;">tanveer.ahmed</div>
<div class="t" style="left:339.4px;top:135.00px;font-size:10px;color:#222;">Downloads</div>
<svg class="a" style="left:1193px;top:113px" width="12" height="10" viewBox="0 0 12 10"><rect x="1" y="0" width="10" height="1.5" fill="#999"/><path d="M1 9H11L6 3Z" fill="#999"/></svg>
<svg class="a" style="left:1179px;top:137px" width="8" height="5" viewBox="0 0 8 5"><path d="M0 0H8L4 4.5Z" fill="#111"/></svg>
<div class="a" style="left:1190px;top:131px;width:19px;height:18px;background:#eef2f8;border-left:1px solid #d8d8d8"></div>
<svg class="a" style="left:1193px;top:133px" width="13" height="13" viewBox="0 0 13 13"><circle cx="8" cy="5" r="3.8" fill="none" stroke="#2a6cb8" stroke-width="1.5"/><path d="M5.3 7.8L1.5 11.5" stroke="#2a6cb8" stroke-width="1.8"/></svg>
<svg class="a" style="left:882px;top:32px" width="12" height="14" viewBox="0 0 12 14"><rect x="1" y="1" width="6" height="8" fill="#c8d8e8" stroke="#98b0c8"/><rect x="4" y="5" width="7" height="8" fill="#d8e4f0" stroke="#98b0c8"/></svg>
<svg class="a" style="left:901px;top:31px" width="13" height="15" viewBox="0 0 13 15"><rect x="1" y="2" width="9" height="11" fill="#d8b878" stroke="#8a6a38"/><rect x="5" y="6" width="7" height="8" fill="#f4f4f4" stroke="#777"/><rect x="3" y="0.5" width="5" height="3" fill="#eee" stroke="#777"/></svg>
<svg class="a" style="left:921px;top:33px" width="14" height="12" viewBox="0 0 14 12"><path d="M3 4H9A3 3 0 0 1 9 10H4" fill="none" stroke="#98b0c8" stroke-width="1.6"/><path d="M1 4L4 1V7Z" fill="#98b0c8"/></svg>
<svg class="a" style="left:940px;top:33px" width="14" height="12" viewBox="0 0 14 12"><path d="M11 4H5A3 3 0 0 0 5 10H10" fill="none" stroke="#98b0c8" stroke-width="1.6"/><path d="M13 4L10 1V7Z" fill="#98b0c8"/></svg>
<svg class="a" style="left:961px;top:31px" width="14" height="15" viewBox="0 0 14 15"><rect x="1" y="1" width="11" height="9" fill="#f0f0f0" stroke="#6a6a6a"/><rect x="3" y="4" width="11" height="10" fill="#fafafa" stroke="#555"/><rect x="3" y="4" width="11" height="3" fill="#555"/></svg>
<svg class="a" style="left:981px;top:31px" width="15" height="15" viewBox="0 0 15 15"><circle cx="7.5" cy="7.5" r="6.5" fill="#f4f4f4" stroke="#333" stroke-width="1.3"/><text x="7.5" y="11.5" text-anchor="middle" font-family="Liberation Sans" font-weight="bold" font-size="11" fill="#222">?</text></svg>
<svg class="a" style="left:339px;top:153px" width="12" height="12" viewBox="0 0 12 12"><circle cx="6" cy="6" r="5" fill="none" stroke="#666" stroke-width="1.1"/><path d="M3.3 4.8H8.7L6 8Z" fill="#666"/></svg>
<svg class="a" style="left:339px;top:426px" width="12" height="12" viewBox="0 0 12 12"><circle cx="6" cy="6" r="5" fill="none" stroke="#666" stroke-width="1.1"/><path d="M3.3 4.8H8.7L6 8Z" fill="#666"/></svg>
<svg class="a" style="left:1193px;top:362px" width="12" height="12" viewBox="0 0 12 12"><circle cx="6" cy="6" r="5" fill="none" stroke="#fff" stroke-width="1.1"/><path d="M3.3 4.8H8.7L6 8Z" fill="#fff"/></svg>
<svg class="a" style="left:88px;top:170px" width="10" height="13" viewBox="0 0 10 13"><path d="M0.5 0.5H6.5L9.5 3.5V12.5H0.5Z" fill="#fff" stroke="#aaa"/></svg>
<svg class="a" style="left:137px;top:175px" width="8" height="5" viewBox="0 0 8 5"><path d="M0 0H8L4 4.5Z" fill="#aaa"/></svg>
<svg class="a" style="left:106px;top:450px" width="8" height="5" viewBox="0 0 8 5"><path d="M0 4.5H8L4 0Z" fill="#aaa"/></svg>
<svg class="a" style="left:343px;top:191px" width="9" height="6" viewBox="0 0 9 6"><path d="M0.5 5L4.5 1L8.5 5" fill="none" stroke="#333" stroke-width="1.3"/></svg>
<svg class="a" style="left:343px;top:388px" width="9" height="6" viewBox="0 0 9 6"><path d="M0.5 1L4.5 5L8.5 1" fill="none" stroke="#333" stroke-width="1.3"/></svg>
<div class="a" style="left:342px;top:304px;width:11px;height:13px;background:#cdcdcd"></div>
<svg class="a" style="left:337px;top:405px" width="10" height="7" viewBox="0 0 10 7"><path d="M0.5 6L5 1.5L9.5 6" fill="none" stroke="#333" stroke-width="1.4"/></svg>
<svg class="a" style="left:343px;top:468px" width="9" height="6" viewBox="0 0 9 6"><path d="M0.5 5L4.5 1L8.5 5" fill="none" stroke="#333" stroke-width="1.3"/></svg>
<svg class="a" style="left:343px;top:576px" width="9" height="6" viewBox="0 0 9 6"><path d="M0.5 1L4.5 5L8.5 1" fill="none" stroke="#333" stroke-width="1.3"/></svg>
<div class="a" style="left:342px;top:479px;width:11px;height:12px;background:#cdcdcd"></div>
<svg class="a" style="left:1198px;top:381px" width="9" height="6" viewBox="0 0 9 6"><path d="M0.5 5L4.5 1L8.5 5" fill="none" stroke="#333" stroke-width="1.3"/></svg>
<svg class="a" style="left:1198px;top:576px" width="9" height="6" viewBox="0 0 9 6"><path d="M0.5 1L4.5 5L8.5 1" fill="none" stroke="#333" stroke-width="1.3"/></svg>
<div class="a" style="left:1197px;top:566px;width:11px;height:7px;background:#cdcdcd"></div>
<svg class="a" style="left:362px;top:152px" width="14" height="13" viewBox="0 0 14 13"><rect x="1" y="2" width="11" height="10" fill="#dde6f0" stroke="#7a8898"/><path d="M3 10L11 1.5L13 3L5 11.5Z" fill="#e8a040" stroke="#8a5020" stroke-width=".8"/></svg>
<div class="a" style="left:362px;top:168px;width:33px;height:17px;background:#f4f4f4;border:1px solid #d4d4d4"></div>
<div class="a" style="left:396px;top:168px;width:8px;height:17px;background:#ececec;border:1px solid #d4d4d4"></div>
<div class="t" style="left:78px;width:600px;text-align:center;top:170.50px;font-size:9px;color:#222;">+4</div>
<svg class="a" style="left:374px;top:180px" width="8" height="5" viewBox="0 0 8 5"><path d="M0 0H8L4 4.5Z" fill="#111"/></svg>
<div class="a" style="left:365px;top:170px;width:3px;height:1px;background:#aaa"></div>
<div class="a" style="left:365px;top:173px;width:3px;height:1px;background:#aaa"></div>
<div class="a" style="left:365px;top:176px;width:3px;height:1px;background:#aaa"></div>
<div class="a" style="left:365px;top:179px;width:3px;height:1px;background:#aaa"></div>
<div class="a" style="left:365px;top:182px;width:3px;height:1px;background:#aaa"></div>
<div class="a" style="left:74px;top:594px;width:1px;height:12px;background:#9a9a9a"></div>
<div class="a" style="left:76px;top:594px;width:1px;height:12px;background:#9a9a9a"></div>
<div class="a" style="left:78px;top:594px;width:1px;height:12px;background:#9a9a9a"></div>
<div class="a" style="left:80px;top:594px;width:1px;height:12px;background:#9a9a9a"></div>
<div class="a" style="left:82px;top:594px;width:1px;height:12px;background:#9a9a9a"></div>
<svg class="a" style="left:86px;top:597px" width="5" height="4" viewBox="0 0 5 4"><path d="M0 3.5H5L2.5 0Z" fill="#333"/></svg>
<div class="a" style="left:93px;top:592px;width:1px;height:15px;background:#c8c8c8"></div>
<div class="a" style="left:1198px;top:593px;width:3px;height:3px;background:#c8c8c8"></div>
<div class="a" style="left:1202px;top:601px;width:3px;height:3px;background:#c8c8c8"></div>
<div class="a" style="left:1198px;top:601px;width:3px;height:3px;background:#c8c8c8"></div>
<div class="a" style="left:1202px;top:597px;width:3px;height:3px;background:#c8c8c8"></div>
<div class="a" style="left:1202px;top:593px;width:0px;height:0px;"></div>
<div class="a" style="left:401px;top:15px;width:476px;height:429px;background:#f0f0f0;border:1px solid #707070;box-shadow:1px 3px 12px rgba(0,0,0,.22)"></div>
<div class="a" style="left:402px;top:16px;width:474px;height:27px;background:#fff"></div>
<svg class="a" style="left:409px;top:21px" width="14" height="14" viewBox="0 0 14 14"><rect x="0.5" y="0.5" width="13" height="13" fill="#f4f4f4" stroke="#9a9a9a"/><rect x="1" y="1" width="12" height="2" fill="#a8b4c4"/><path d="M2 10L6 8L8.5 3.5L12 11L9 10L6.5 12Z" fill="#d9622b"/><path d="M2 10L6 8L6.5 11Z" fill="#4a8ac4"/></svg>
<div class="t" style="left:426px;top:23.80px;font-size:9.8px;color:#1a1a1a;-webkit-text-stroke:0">Figure 1</div>
<div class="a" style="left:776px;top:28px;width:8px;height:1px;background:#333"></div>
<div class="a" style="left:813px;top:24px;width:9px;height:9px;border:1px solid #333"></div>
<svg class="a" style="left:852px;top:23px" width="10" height="10" viewBox="0 0 10 10"><path d="M0.5 0.5L9.5 9.5M9.5 0.5L0.5 9.5" stroke="#333" stroke-width="1"/></svg>
<div class="a" style="left:402px;top:43px;width:474px;height:20px;background:#fff"></div>
<div class="t" style="left:408.4px;top:47.55px;font-size:9.9px;color:#1a1a1a;text-decoration-thickness:1px;text-underline-offset:1px;-webkit-text-stroke:0.1px"><u>F</u>ile</div>
<div class="t" style="left:437.9px;top:47.55px;font-size:9.9px;color:#1a1a1a;text-decoration-thickness:1px;text-underline-offset:1px;-webkit-text-stroke:0.1px"><u>E</u>dit</div>
<div class="t" style="left:468.9px;top:47.55px;font-size:9.9px;color:#1a1a1a;text-decoration-thickness:1px;text-underline-offset:1px;-webkit-text-stroke:0.1px"><u>V</u>iew</div>
<div class="t" style="left:504.1px;top:47.55px;font-size:9.9px;color:#1a1a1a;text-decoration-thickness:1px;text-underline-offset:1px;-webkit-text-stroke:0.1px"><u>I</u>nsert</div>
<div class="t" style="left:542.4px;top:47.55px;font-size:9.9px;color:#1a1a1a;text-decoration-thickness:1px;text-underline-offset:1px;-webkit-text-stroke:0.1px"><u>T</u>ools</div>
<div class="t" style="left:580px;top:47.55px;font-size:9.9px;color:#1a1a1a;text-decoration-thickness:1px;text-underline-offset:1px;-webkit-text-stroke:0.1px"><u>D</u>esktop</div>
<div class="t" style="left:630.4px;top:47.55px;font-size:9.9px;color:#1a1a1a;text-decoration-thickness:1px;text-underline-offset:1px;-webkit-text-stroke:0.1px"><u>W</u>indow</div>
<div class="t" style="left:682.1px;top:47.55px;font-size:9.9px;color:#1a1a1a;text-decoration-thickness:1px;text-underline-offset:1px;-webkit-text-stroke:0.1px"><u>H</u>elp</div>
<svg class="a" style="left:865px;top:48px" width="8" height="8" viewBox="0 0 8 8"><path d="M1 1L6.5 6.5M6.5 2.5V6.5H2.5" stroke="#111" stroke-width="1.2" fill="none"/></svg>
<div class="a" style="left:402px;top:62px;width:474px;height:1px;background:#d4d4d4"></div>
<div class="a" style="left:402px;top:63px;width:474px;height:22px;background:linear-gradient(#f6f6f6,#eeeeee)"></div>
<div class="a" style="left:402px;top:84px;width:474px;height:1px;background:#cfcfcf"></div>
<svg class="a" style="left:404px;top:66px" width="15" height="15" viewBox="0 0 15 15"><path d="M2.5 1.5H9.5L13.5 5.5V14H2.5Z" fill="#fdfdfd" stroke="#6f7f9f"/><path d="M9.5 1.5V5.5H13.5" fill="none" stroke="#6f7f9f"/><circle cx="3" cy="2.5" r="2" fill="#f0a060"/></svg>
<svg class="a" style="left:423px;top:67px" width="15" height="14" viewBox="0 0 15 14"><path d="M1 3H5L6.5 4.5H12V13H1Z" fill="#d8b840" stroke="#9a7a20"/><path d="M2.5 6.5H14L12 13H1Z" fill="#f4dc60" stroke="#a88a20"/><path d="M9 1.5L12 3.5" stroke="#333" stroke-width="1"/></svg>
<svg class="a" style="left:443px;top:67px" width="14" height="14" viewBox="0 0 14 14"><rect x="0.5" y="0.5" width="13" height="13" fill="#4a4aa8" stroke="#2a2a78"/><rect x="3" y="1" width="8" height="5.5" fill="#e8e8f8"/><rect x="4" y="9" width="6" height="4.5" fill="#f0f0f8"/><rect x="5" y="10" width="2" height="3" fill="#2a2a78"/></svg>
<svg class="a" style="left:462px;top:66px" width="15" height="15" viewBox="0 0 15 15"><rect x="4" y="1" width="7" height="5" fill="#e8e8e8" stroke="#999"/><path d="M1 7Q1 5 3 5H12Q14 5 14 7V12H1Z" fill="#c4c4c4" stroke="#8a8a8a"/><rect x="3.5" y="10" width="8" height="4" fill="#f4f4f4" stroke="#999"/></svg>
<div class="a" style="left:482px;top:66px;width:1px;height:18px;background:#c8c8c8"></div>
<svg class="a" style="left:492px;top:67px" width="10" height="14" viewBox="0 0 10 14"><path d="M1 1V11L3.6 8.6L5.6 13L7.4 12.2L5.4 7.8H9Z" fill="#fff" stroke="#111" stroke-width="1"/></svg>
<div class="a" style="left:508px;top:66px;width:1px;height:18px;background:#c8c8c8"></div>
<svg class="a" style="left:515px;top:67px" width="14" height="14" viewBox="0 0 14 14"><path d="M8.5 8.5L13 13" stroke="#c8a060" stroke-width="2.6" stroke-linecap="round"/><circle cx="5.5" cy="5.5" r="4.5" fill="#eaf4fc" stroke="#6a98c8" stroke-width="1.3"/><path d="M3 5.5H8" stroke="#2a5a98" stroke-width="1.5"/><path d="M5.5 3V8" stroke="#2a5a98" stroke-width="1.5"/></svg>
<svg class="a" style="left:534.5px;top:67px" width="14" height="14" viewBox="0 0 14 14"><path d="M8.5 8.5L13 13" stroke="#c8a060" stroke-width="2.6" stroke-linecap="round"/><circle cx="5.5" cy="5.5" r="4.5" fill="#eaf4fc" stroke="#6a98c8" stroke-width="1.3"/><path d="M3 5.5H8" stroke="#2a5a98" stroke-width="1.5"/></svg>
<svg class="a" style="left:554px;top:66px" width="15" height="15" viewBox="0 0 15 15"><path d="M3 9V5Q3 4 4 4Q5 4 5 5V3Q5 2 6 2Q7 2 7 3V2.5Q7 1.5 8 1.5Q9 1.5 9 2.5V3.5Q9 2.5 10 2.5Q11 2.5 11 3.5V6Q11.5 5 12.5 5.5Q13 6 12.5 7L10.5 12Q10 13.5 8 13.5H6Q4 13.5 3.5 12Z" fill="#f6e0c8" stroke="#555" stroke-width=".9"/></svg>
<svg class="a" style="left:573px;top:66px" width="15" height="15" viewBox="0 0 15 15"><path d="M12.8 9A5.5 5.5 0 1 1 7.5 2" fill="none" stroke="#333" stroke-width="2"/><path d="M5 0L9 2L5.5 4.5Z" fill="#333"/><circle cx="7.5" cy="7.5" r="3" fill="none" stroke="#333" stroke-width="1.2"/></svg>
<svg class="a" style="left:592px;top:66px" width="15" height="15" viewBox="0 0 15 15"><rect x="6" y="1" width="8" height="8" fill="#f0f0a8" stroke="#8a9a40"/><path d="M8 3.5H12M8 5.5H12" stroke="#6a7a30"/><path d="M1 3L11 13" stroke="#3a5aa8" stroke-dasharray="1.5 1" stroke-width="1"/><path d="M4 8V14M1 11H7" stroke="#111" stroke-width="1.8"/></svg>
<svg class="a" style="left:612px;top:66px" width="15" height="15" viewBox="0 0 15 15"><path d="M13 1L6 9" stroke="#555" stroke-width="2"/><path d="M6 8Q2 8 2 13Q5 13 7 10Z" fill="#333"/><rect x="9" y="9" width="5" height="5" fill="#e01818"/></svg>
<svg class="a" style="left:632px;top:72px" width="6" height="4" viewBox="0 0 6 4"><path d="M0 0H6L3 3.5Z" fill="#222"/></svg>
<div class="a" style="left:642px;top:66px;width:1px;height:18px;background:#c8c8c8"></div>
<svg class="a" style="left:648px;top:66px" width="16" height="15" viewBox="0 0 16 15"><rect x="3" y="1" width="11" height="9" fill="#e4e8f0" stroke="#6a6a7a"/><rect x="1" y="4" width="11" height="8" fill="#fafafa" stroke="#5a5a6a"/><rect x="1" y="4" width="11" height="2" fill="#7a7a8a"/><path d="M5 11.5H13" stroke="#8a8a9a" stroke-width="2.4" stroke-linecap="round"/></svg>
<div class="a" style="left:668px;top:66px;width:1px;height:18px;background:#c8c8c8"></div>
<svg class="a" style="left:678px;top:66px" width="10" height="15" viewBox="0 0 10 15"><rect x="0.5" y="0.5" width="8" height="13" fill="url(#cbg)" stroke="#6a6a8a"/><defs><linearGradient id="cbg" x1="0" y1="0" x2="0" y2="1"><stop offset="0" stop-color="#6ab0e8"/><stop offset=".5" stop-color="#a8e0b0"/><stop offset="1" stop-color="#f0e070"/></linearGradient></defs></svg>
<svg class="a" style="left:694px;top:66px" width="15" height="15" viewBox="0 0 15 15"><rect x="0.5" y="0.5" width="13" height="13" fill="#fafafa" stroke="#6a6a8a"/><rect x="2.5" y="3" width="3" height="3" fill="#e04848"/><rect x="2.5" y="8" width="3" height="3" fill="#4848c8"/><path d="M7 4.5H12M7 9.5H12" stroke="#333"/></svg>
<div class="a" style="left:714px;top:66px;width:1px;height:18px;background:#c8c8c8"></div>
<div class="a" style="left:723px;top:69px;width:10px;height:10px;background:#a0a0a0;border:1px solid #8a8a8a;border-radius:1px"></div>
<svg class="a" style="left:740px;top:67px" width="14" height="13" viewBox="0 0 14 13"><rect x="0.5" y="0.5" width="13" height="12" fill="#fafafa" stroke="#2a3a6a"/><rect x="1" y="1" width="12" height="2.5" fill="#4a6aa8"/><path d="M3.5 3.5V12M10.5 3.5V12" stroke="#2a3a6a" stroke-width="1.6"/></svg>
<div class="a" style="left:402px;top:85px;width:474px;height:358px;background:#f0f0f0"></div>
<svg class="a" style="left:402px;top:86px" width="474" height="357" viewBox="402 86 474 357"><rect x="464.5" y="113.5" width="366" height="290" fill="#fff" stroke="#3a3a3a" stroke-width="1"/><path d="M464.50 403.5V400M464.50 113.5V117" stroke="#3a3a3a" stroke-width="1"/><path d="M516.50 403.5V400M516.50 113.5V117" stroke="#3a3a3a" stroke-width="1"/><path d="M569.50 403.5V400M569.50 113.5V117" stroke="#3a3a3a" stroke-width="1"/><path d="M621.50 403.5V400M621.50 113.5V117" stroke="#3a3a3a" stroke-width="1"/><path d="M673.50 403.5V400M673.50 113.5V117" stroke="#3a3a3a" stroke-width="1"/><path d="M725.50 403.5V400M725.50 113.5V117" stroke="#3a3a3a" stroke-width="1"/><path d="M778.50 403.5V400M778.50 113.5V117" stroke="#3a3a3a" stroke-width="1"/><path d="M830.50 403.5V400M830.50 113.5V117" stroke="#3a3a3a" stroke-width="1"/><path d="M464.5 403.50H468.5M830.5 403.50H826.5" stroke="#3a3a3a" stroke-width="1"/><path d="M464.5 371.50H468.5M830.5 371.50H826.5" stroke="#3a3a3a" stroke-width="1"/><path d="M464.5 339.50H468.5M830.5 339.50H826.5" stroke="#3a3a3a" stroke-width="1"/><path d="M464.5 306.50H468.5M830.5 306.50H826.5" stroke="#3a3a3a" stroke-width="1"/><path d="M464.5 274.50H468.5M830.5 274.50H826.5" stroke="#3a3a3a" stroke-width="1"/><path d="M464.5 242.50H468.5M830.5 242.50H826.5" stroke="#3a3a3a" stroke-width="1"/><path d="M464.5 210.50H468.5M830.5 210.50H826.5" stroke="#3a3a3a" stroke-width="1"/><path d="M464.5 177.50H468.5M830.5 177.50H826.5" stroke="#3a3a3a" stroke-width="1"/><path d="M464.5 145.50H468.5M830.5 145.50H826.5" stroke="#3a3a3a" stroke-width="1"/><path d="M464.5 113.50H468.5M830.5 113.50H826.5" stroke="#3a3a3a" stroke-width="1"/><path d="M464.0 403.50 L464.5 403.50 L465.0 403.50 L465.5 403.50 L466.0 403.50 L466.5 403.50 L467.0 403.50 L467.5 403.50 L468.0 403.50 L468.5 403.50 L469.0 403.50 L469.5 403.50 L470.0 403.50 L470.5 403.50 L471.0 403.50 L471.5 403.50 L472.0 403.50 L472.5 403.50 L473.0 403.50 L473.5 403.50 L474.0 403.50 L474.5 403.50 L475.0 403.50 L475.5 403.50 L476.0 403.50 L476.5 403.50 L477.0 403.50 L477.5 403.50 L478.0 403.50 L478.5 403.50 L479.0 403.50 L479.5 403.50 L480.0 403.50 L480.5 403.50 L481.0 403.50 L481.5 403.50 L482.0 403.50 L482.5 403.50 L483.0 403.50 L483.5 403.50 L484.0 403.50 L484.5 403.50 L485.0 403.50 L485.5 403.50 L486.0 403.50 L486.5 403.50 L487.0 403.50 L487.5 403.50 L488.0 403.50 L488.5 403.50 L489.0 403.50 L489.5 403.50 L490.0 403.50 L490.5 403.50 L491.0 403.50 L491.5 403.50 L492.0 403.50 L492.5 403.50 L493.0 403.50 L493.5 403.50 L494.0 403.17 L494.5 403.12 L495.0 403.07 L495.5 403.02 L496.0 402.97 L496.5 402.92 L497.0 402.87 L497.5 402.81 L498.0 402.75 L498.5 402.69 L499.0 402.63 L499.5 402.56 L500.0 402.49 L500.5 402.42 L501.0 402.35 L501.5 402.28 L502.0 402.20 L502.5 402.12 L503.0 402.04 L503.5 401.96 L504.0 401.87 L504.5 401.78 L505.0 401.69 L505.5 401.60 L506.0 401.51 L506.5 401.41 L507.0 401.31 L507.5 401.20 L508.0 401.10 L508.5 400.99 L509.0 400.89 L509.5 400.78 L510.0 400.67 L510.5 400.57 L511.0 400.46 L511.5 400.36 L512.0 400.26 L512.5 400.17 L513.0 400.08 L513.5 399.99 L514.0 399.91 L514.5 399.84 L515.0 399.77 L515.5 399.71 L516.0 399.66 L516.5 399.61 L517.0 399.58 L517.5 399.55 L518.0 399.53 L518.5 399.53 L519.0 399.54 L519.5 399.56 L520.0 399.59 L520.5 399.63 L521.0 399.69 L521.5 399.76 L522.0 399.85 L522.5 399.95 L523.0 400.06 L523.5 400.18 L524.0 400.31 L524.5 400.45 L525.0 400.60 L525.5 400.75 L526.0 400.91 L526.5 401.07 L527.0 401.23 L527.5 401.40 L528.0 401.56 L528.5 401.73 L529.0 401.89 L529.5 402.06 L530.0 402.22 L530.5 402.37 L531.0 402.52 L531.5 402.66 L532.0 402.80 L532.5 402.93 L533.0 403.05 L533.5 403.16 L534.0 403.26 L534.5 403.35 L535.0 403.44 L535.5 403.50 L536.0 403.50 L536.5 403.50 L537.0 403.50 L537.5 403.50 L538.0 403.50 L538.5 403.50 L539.0 403.50 L539.5 403.50 L540.0 403.50 L540.5 403.50 L541.0 403.50 L541.5 403.50 L542.0 403.50 L542.5 403.50 L543.0 403.50 L543.5 403.50 L544.0 403.50 L544.5 403.50 L545.0 403.50 L545.5 403.50 L546.0 403.50 L546.5 403.50 L547.0 403.50 L547.5 403.50 L548.0 403.50 L548.5 403.50 L549.0 403.50 L549.5 403.50 L550.0 403.50 L550.5 403.50 L551.0 403.50 L551.5 403.50 L552.0 403.50 L552.5 403.50 L553.0 403.50 L553.5 403.50 L554.0 403.50 L554.5 403.50 L555.0 403.50 L555.5 403.50 L556.0 403.50 L556.5 403.50 L557.0 403.50 L557.5 403.50 L558.0 403.50 L558.5 403.50 L559.0 403.50 L559.5 403.50 L560.0 403.50 L560.5 403.50 L561.0 403.50 L561.5 403.50 L562.0 403.50 L562.5 403.50 L563.0 403.50 L563.5 403.50 L564.0 403.50 L564.5 403.50 L565.0 403.50 L565.5 403.50 L566.0 403.50 L566.5 403.50 L567.0 403.50 L567.5 403.50 L568.0 403.50 L568.5 403.50 L569.0 403.50 L569.5 403.50 L570.0 403.50 L570.5 403.50 L571.0 403.50 L571.5 403.50 L572.0 403.50 L572.5 403.50 L573.0 403.50 L573.5 403.50 L574.0 403.50 L574.5 403.50 L575.0 403.50 L575.5 403.50 L576.0 403.50 L576.5 403.50 L577.0 403.50 L577.5 403.50 L578.0 403.50 L578.5 403.50 L579.0 403.48 L579.5 403.40 L580.0 403.30 L580.5 403.20 L581.0 403.09 L581.5 402.97 L582.0 402.84 L582.5 402.69 L583.0 402.54 L583.5 402.38 L584.0 402.20 L584.5 402.01 L585.0 401.81 L585.5 401.60 L586.0 401.37 L586.5 401.14 L587.0 400.90 L587.5 400.65 L588.0 400.39 L588.5 400.13 L589.0 399.87 L589.5 399.60 L590.0 399.33 L590.5 399.06 L591.0 398.78 L591.5 398.51 L592.0 398.25 L592.5 397.98 L593.0 397.72 L593.5 397.46 L594.0 397.22 L594.5 396.98 L595.0 396.74 L595.5 396.52 L596.0 396.31 L596.5 396.11 L597.0 395.93 L597.5 395.75 L598.0 395.60 L598.5 395.46 L599.0 395.33 L599.5 395.23 L600.0 395.14 L600.5 395.06 L601.0 395.00 L601.5 394.94 L602.0 394.89 L602.5 394.84 L603.0 394.80 L603.5 394.76 L604.0 394.71 L604.5 394.67 L605.0 394.61 L605.5 394.55 L606.0 394.47 L606.5 394.38 L607.0 394.28 L607.5 394.16 L608.0 394.01 L608.5 393.85 L609.0 393.66 L609.5 393.45 L610.0 393.21 L610.5 392.94 L611.0 392.65 L611.5 392.33 L612.0 392.00 L612.5 391.65 L613.0 391.28 L613.5 390.89 L614.0 390.49 L614.5 390.08 L615.0 389.66 L615.5 389.23 L616.0 388.79 L616.5 388.35 L617.0 387.90 L617.5 387.45 L618.0 387.00 L618.5 386.55 L619.0 386.10 L619.5 385.66 L620.0 385.22 L620.5 384.80 L621.0 384.38 L621.5 383.97 L622.0 383.57 L622.5 383.19 L623.0 382.83 L623.5 382.48 L624.0 382.15 L624.5 381.84 L625.0 381.56 L625.5 381.30 L626.0 381.07 L626.5 380.86 L627.0 380.68 L627.5 380.53 L628.0 380.40 L628.5 380.30 L629.0 380.22 L629.5 380.15 L630.0 380.11 L630.5 380.08 L631.0 380.07 L631.5 380.07 L632.0 380.08 L632.5 380.10 L633.0 380.13 L633.5 380.16 L634.0 380.21 L634.5 380.25 L635.0 380.30 L635.5 380.34 L636.0 380.39 L636.5 380.43 L637.0 380.46 L637.5 380.49 L638.0 380.51 L638.5 380.53 L639.0 380.53 L639.5 380.51 L640.0 380.48 L640.5 380.44 L641.0 380.38 L641.5 380.29 L642.0 380.19 L642.5 380.06 L643.0 379.91 L643.5 379.73 L644.0 379.53 L644.5 379.29 L645.0 379.02 L645.5 378.72 L646.0 378.39 L646.5 378.02 L647.0 377.61 L647.5 377.17 L648.0 376.68 L648.5 376.15 L649.0 375.59 L649.5 374.98 L650.0 374.32 L650.5 373.63 L651.0 372.89 L651.5 372.10 L652.0 371.26 L652.5 370.38 L653.0 369.45 L653.5 368.46 L654.0 367.43 L654.5 366.34 L655.0 365.20 L655.5 364.01 L656.0 362.76 L656.5 361.46 L657.0 360.10 L657.5 358.68 L658.0 357.20 L658.5 355.67 L659.0 354.07 L659.5 352.41 L660.0 350.69 L660.5 348.90 L661.0 347.06 L661.5 345.16 L662.0 343.23 L662.5 341.25 L663.0 339.25 L663.5 337.22 L664.0 335.17 L664.5 333.11 L665.0 331.04 L665.5 328.98 L666.0 326.92 L666.5 324.88 L667.0 322.86 L667.5 320.87 L668.0 318.92 L668.5 317.00 L669.0 315.13 L669.5 313.32 L670.0 311.56 L670.5 309.87 L671.0 308.24 L671.5 306.66 L672.0 305.13 L672.5 303.63 L673.0 302.15 L673.5 300.70 L674.0 299.26 L674.5 297.82 L675.0 296.38 L675.5 294.93 L676.0 293.46 L676.5 291.97 L677.0 290.43 L677.5 288.86 L678.0 287.23 L678.5 285.55 L679.0 283.80 L679.5 281.97 L680.0 280.07 L680.5 278.07 L681.0 275.99 L681.5 273.83 L682.0 271.59 L682.5 269.27 L683.0 266.89 L683.5 264.43 L684.0 261.91 L684.5 259.34 L685.0 256.70 L685.5 254.02 L686.0 251.29 L686.5 248.51 L687.0 245.69 L687.5 242.84 L688.0 239.95 L688.5 237.04 L689.0 234.12 L689.5 231.19 L690.0 228.27 L690.5 225.37 L691.0 222.49 L691.5 219.65 L692.0 216.86 L692.5 214.13 L693.0 211.46 L693.5 208.85 L694.0 206.31 L694.5 203.83 L695.0 201.42 L695.5 199.06 L696.0 196.76 L696.5 194.52 L697.0 192.34 L697.5 190.20 L698.0 188.13 L698.5 186.10 L699.0 184.12 L699.5 182.20 L700.0 180.32 L700.5 178.48 L701.0 176.69 L701.5 174.94 L702.0 173.24 L702.5 171.58 L703.0 169.95 L703.5 168.36 L704.0 166.81 L704.5 165.29 L705.0 163.81 L705.5 162.36 L706.0 160.94 L706.5 159.54 L707.0 158.18 L707.5 156.84 L708.0 155.53 L708.5 154.24 L709.0 152.97 L709.5 151.73 L710.0 150.50 L710.5 149.29 L711.0 148.10 L711.5 146.93 L712.0 145.78 L712.5 144.67 L713.0 143.62 L713.5 142.65 L714.0 141.76 L714.5 140.97 L715.0 140.29 L715.5 139.75 L716.0 139.36 L716.5 139.13 L717.0 139.08 L717.5 139.21 L718.0 139.56 L718.5 140.12 L719.0 140.92 L719.5 141.98 L720.0 143.30 L720.5 144.89 L721.0 146.76 L721.5 148.87 L722.0 151.21 L722.5 153.77 L723.0 156.52 L723.5 159.46 L724.0 162.57 L724.5 165.82 L725.0 169.21 L725.5 172.71 L726.0 176.29 L726.5 179.95 L727.0 183.66 L727.5 187.39 L728.0 191.14 L728.5 194.88 L729.0 198.61 L729.5 202.33 L730.0 206.05 L730.5 209.75 L731.0 213.43 L731.5 217.10 L732.0 220.75 L732.5 224.39 L733.0 228.00 L733.5 231.60 L734.0 235.20 L734.5 238.79 L735.0 242.38 L735.5 245.99 L736.0 249.60 L736.5 253.23 L737.0 256.89 L737.5 260.56 L738.0 264.25 L738.5 267.95 L739.0 271.66 L739.5 275.36 L740.0 279.05 L740.5 282.72 L741.0 286.37 L741.5 290.00 L742.0 293.59 L742.5 297.14 L743.0 300.66 L743.5 304.14 L744.0 307.57 L744.5 310.97 L745.0 314.31 L745.5 317.61 L746.0 320.86 L746.5 324.06 L747.0 327.21 L747.5 330.30 L748.0 333.33 L748.5 336.31 L749.0 339.23 L749.5 342.08 L750.0 344.87 L750.5 347.59 L751.0 350.24 L751.5 352.82 L752.0 355.34 L752.5 357.77 L753.0 360.13 L753.5 362.42 L754.0 364.62 L754.5 366.74 L755.0 368.79 L755.5 370.75 L756.0 372.64 L756.5 374.45 L757.0 376.20 L757.5 377.86 L758.0 379.46 L758.5 381.00 L759.0 382.46 L759.5 383.86 L760.0 385.20 L760.5 386.48 L761.0 387.70 L761.5 388.86 L762.0 389.96 L762.5 391.01 L763.0 392.01 L763.5 392.96 L764.0 393.86 L764.5 394.71 L765.0 395.52 L765.5 396.28 L766.0 397.00 L766.5 397.67 L767.0 398.31 L767.5 398.92 L768.0 399.49 L768.5 400.02 L769.0 400.52 L769.5 400.99 L770.0 401.44 L770.5 401.85 L771.0 402.24 L771.5 402.61 L772.0 402.95 L772.5 403.27 L773.0 403.50 L773.5 403.50 L774.0 403.50 L774.5 403.50 L775.0 403.50 L775.5 403.50 L776.0 403.50 L776.5 403.50 L777.0 403.50 L777.5 403.50 L778.0 403.50 L778.5 403.50 L779.0 403.50 L779.5 403.50 L780.0 403.50 L780.5 403.50 L781.0 403.50 L781.5 403.50 L782.0 403.50 L782.5 403.50 L783.0 403.50 L783.5 403.50 L784.0 403.50 L784.5 403.50 L785.0 403.50 L785.5 403.50 L786.0 403.50 L786.5 403.50 L787.0 403.50 L787.5 403.50 L788.0 403.50 L788.5 403.50 L789.0 403.50 L789.5 403.50 L790.0 403.50 L790.5 403.50 L791.0 403.50 L791.5 403.50 L792.0 403.50 L792.5 403.50 L793.0 403.50 L793.5 403.50 L794.0 403.50 L794.5 403.50 L795.0 403.50 L795.5 403.50 L796.0 403.50 L796.5 403.50 L797.0 403.50 L797.5 403.50 L798.0 403.50 L798.5 403.50 L799.0 403.50 L799.5 403.50 L800.0 403.50 L800.5 403.50 L801.0 403.50 L801.5 403.50 L802.0 403.50 L802.5 403.50 L803.0 403.50 L803.5 403.50 L804.0 403.50 L804.5 403.50 L805.0 403.50 L805.5 403.50 L806.0 403.50 L806.5 403.50 L807.0 403.50 L807.5 403.50 L808.0 403.50 L808.5 403.50 L809.0 403.50 L809.5 403.50 L810.0 403.50 L810.5 403.50 L811.0 403.50 L811.5 403.50 L812.0 403.50 L812.5 403.50 L813.0 403.50 L813.5 403.50 L814.0 403.50 L814.5 403.50 L815.0 403.50 L815.5 403.50 L816.0 403.50 L816.5 403.50 L817.0 403.50 L817.5 403.50 L818.0 403.50 L818.5 403.50 L819.0 403.50 L819.5 403.50 L820.0 403.50 L820.5 403.50 L821.0 403.50 L821.5 403.50 L822.0 403.50 L822.5 403.50 L823.0 403.50 L823.5 403.50 L824.0 403.50 L824.5 403.50 L825.0 403.50 L825.5 403.50 L826.0 403.50 L826.5 403.50 L827.0 403.50 L827.5 403.50 L828.0 403.50 L828.5 403.50 L829.0 403.50 L829.5 403.50 L830.0 403.50 L830.5 403.50 L831.0 403.50" fill="none" stroke="#3f8cc0" stroke-width="1.1"/></svg>
<div class="t" style="left:164.5px;width:600px;text-align:center;top:412.00px;font-size:10.6px;color:#262626;-webkit-text-stroke:0.05px">-20</div>
<div class="t" style="left:216.78571428571433px;width:600px;text-align:center;top:412.00px;font-size:10.6px;color:#262626;-webkit-text-stroke:0.05px">0</div>
<div class="t" style="left:269.07142857142856px;width:600px;text-align:center;top:412.00px;font-size:10.6px;color:#262626;-webkit-text-stroke:0.05px">20</div>
<div class="t" style="left:321.3571428571429px;width:600px;text-align:center;top:412.00px;font-size:10.6px;color:#262626;-webkit-text-stroke:0.05px">40</div>
<div class="t" style="left:373.6428571428571px;width:600px;text-align:center;top:412.00px;font-size:10.6px;color:#262626;-webkit-text-stroke:0.05px">60</div>
<div class="t" style="left:425.92857142857144px;width:600px;text-align:center;top:412.00px;font-size:10.6px;color:#262626;-webkit-text-stroke:0.05px">80</div>
<div class="t" style="left:478.2142857142858px;width:600px;text-align:center;top:412.00px;font-size:10.6px;color:#262626;-webkit-text-stroke:0.05px">100</div>
<div class="t" style="left:530.5px;width:600px;text-align:center;top:412.00px;font-size:10.6px;color:#262626;-webkit-text-stroke:0.05px">120</div>
<div class="t" style="left:-141.5px;width:600px;text-align:right;top:399.50px;font-size:10.6px;color:#262626;-webkit-text-stroke:0.05px">0</div>
<div class="t" style="left:-141.5px;width:600px;text-align:right;top:367.28px;font-size:10.6px;color:#262626;-webkit-text-stroke:0.05px">0.005</div>
<div class="t" style="left:-141.5px;width:600px;text-align:right;top:335.06px;font-size:10.6px;color:#262626;-webkit-text-stroke:0.05px">0.01</div>
<div class="t" style="left:-141.5px;width:600px;text-align:right;top:302.83px;font-size:10.6px;color:#262626;-webkit-text-stroke:0.05px">0.015</div>
<div class="t" style="left:-141.5px;width:600px;text-align:right;top:270.61px;font-size:10.6px;color:#262626;-webkit-text-stroke:0.05px">0.02</div>
<div class="t" style="left:-141.5px;width:600px;text-align:right;top:238.39px;font-size:10.6px;color:#262626;-webkit-text-stroke:0.05px">0.025</div>
<div class="t" style="left:-141.5px;width:600px;text-align:right;top:206.17px;font-size:10.6px;color:#262626;-webkit-text-stroke:0.05px">0.03</div>
<div class="t" style="left:-141.5px;width:600px;text-align:right;top:173.94px;font-size:10.6px;color:#262626;-webkit-text-stroke:0.05px">0.035</div>
<div class="t" style="left:-141.5px;width:600px;text-align:right;top:141.72px;font-size:10.6px;color:#262626;-webkit-text-stroke:0.05px">0.04</div>
<div class="t" style="left:-141.5px;width:600px;text-align:right;top:109.50px;font-size:10.6px;color:#262626;-webkit-text-stroke:0.05px">0.045</div>
<svg class="a" style="left:561px;top:455px" width="10" height="17" viewBox="0 0 10 17"><path d="M2 1H4.5L5 1.5L5.5 1H8M5 1.5V15.5M2 16H4.5L5 15.5L5.5 16H8" fill="none" stroke="#fff" stroke-width="2.2"/><path d="M2 1H4.5L5 1.5L5.5 1H8M5 1.5V15.5M2 16H4.5L5 15.5L5.5 16H8" fill="none" stroke="#111" stroke-width="1"/></svg>
<div class="a" style="left:61px;top:609px;width:913px;height:7px;background:#1b1b1b"></div>
<div class="a" style="left:974px;top:609px;width:242px;height:7px;background:#f0f0f0"></div>
<div class="a" style="left:61px;top:616px;width:1154px;height:35px;background:#3c3f45"></div>
<div class="a" style="left:1214px;top:616px;width:1px;height:35px;background:#888b90"></div>
<svg class="a" style="left:74px;top:627px" width="16" height="15" viewBox="0 0 16 15"><path d="M0 2.2L6.6 1.3V7H0Z M7.4 1.2L16 0V7H7.4Z M0 7.9H6.6V13.7L0 12.8Z M7.4 7.9H16V15L7.4 13.8Z" fill="#fff"/></svg>
<div class="a" style="left:102px;top:617px;width:291px;height:33px;background:#f0f0f0"></div>
<svg class="a" style="left:111px;top:625px" width="15" height="16" viewBox="0 0 15 16"><circle cx="9.5" cy="5.5" r="4.5" fill="none" stroke="#222" stroke-width="1.3"/><path d="M6.3 8.8L1 14.3" stroke="#222" stroke-width="1.4"/></svg>
<div class="t" style="left:136px;top:627.90px;font-size:12.2px;color:#2a2a2a;-webkit-text-stroke:0">Type here to search</div>
<div class="a" style="left:407px;top:627px;width:13px;height:13px;border-radius:50%;border:1.6px solid #fff"></div>
<svg class="a" style="left:446px;top:626px" width="16" height="15" viewBox="0 0 16 15"><path d="M1 1.5H10M1 13.5H10M2 3.5V11.5H9V3.5Z" fill="none" stroke="#fff" stroke-width="1.2"/><path d="M13.5 1V3M13.5 5V14" stroke="#fff" stroke-width="1.4"/></svg>
<div class="a" style="left:518px;top:617px;width:36px;height:33px;background:#5f6267"></div>
<div class="a" style="left:479.5px;top:649px;width:34px;height:2px;background:#7fb3de"></div>
<div class="a" style="left:519px;top:649px;width:34px;height:2px;background:#7fb3de"></div>
<div class="a" style="left:561px;top:649px;width:34px;height:2px;background:#7fb3de"></div>
<div class="a" style="left:601.5px;top:649px;width:34px;height:2px;background:#7fb3de"></div>
<div class="a" style="left:642px;top:649px;width:34px;height:2px;background:#7fb3de"></div>
<div class="a" style="left:682.7px;top:649px;width:34px;height:2px;background:#7fb3de"></div>
<div class="a" style="left:723.3px;top:649px;width:34px;height:2px;background:#7fb3de"></div>
<div class="a" style="left:764px;top:649px;width:34px;height:2px;background:#7fb3de"></div>
<div class="a" style="left:804.5px;top:649px;width:34px;height:2px;background:#7fb3de"></div>
<div class="a" style="left:844.5px;top:649px;width:34px;height:2px;background:#7fb3de"></div>
<div class="a" style="left:884.5px;top:649px;width:34px;height:2px;background:#7fb3de"></div>
<div class="a" style="left:924.5px;top:649px;width:34px;height:2px;background:#7fb3de"></div>
<svg class="a" style="left:487px;top:625px" width="20" height="17" viewBox="0 0 20 17"><path d="M0 2H7L8.5 0.5H19V15H0Z" fill="#e8b832"/><rect x="0" y="4" width="19" height="11.5" fill="#f7d56a"/><rect x="6" y="9" width="7" height="6.5" fill="#1f8ad6"/><rect x="8" y="11" width="3" height="4.5" fill="#f7d56a"/></svg>
<svg class="a" style="left:526px;top:624px" width="20" height="19" viewBox="0 0 20 19"><path d="M0 10.5L5.5 8L11 0.5Q14 3 19 16L13.5 13.5L9.5 18.5Z" fill="#e26a2a"/><path d="M11 0.5Q14 3 19 16L14 12Z" fill="#f6b04a"/><path d="M0 10.5L5.5 8L7.5 12Z" fill="#3a8ad6"/></svg>
<svg class="a" style="left:567px;top:623px" width="22" height="21" viewBox="0 0 22 21"><circle cx="12" cy="10.5" r="9.8" fill="#e0602e"/><path d="M12 0.7A9.8 9.8 0 0 1 21.8 10.5H12Z" fill="#f29066"/><path d="M12 10.5H21.8A9.8 9.8 0 0 1 12 20.3Z" fill="#c2431c"/><rect x="0" y="4.5" width="11" height="12" rx="1" fill="#c4391a"/><text x="5.5" y="14.3" text-anchor="middle" font-family="Liberation Sans" font-weight="bold" font-size="10" fill="#fff">P</text></svg>
<svg class="a" style="left:608px;top:623px" width="21" height="21" viewBox="0 0 21 21"><defs><radialGradient id="ffg" cx=".35" cy=".75" r=".9"><stop offset="0" stop-color="#ffd34a"/><stop offset=".5" stop-color="#ff7a2e"/><stop offset="1" stop-color="#e2206a"/></radialGradient></defs><circle cx="10.5" cy="11" r="9.5" fill="url(#ffg)"/><circle cx="10" cy="10.5" r="4.6" fill="#6a38c8"/><path d="M14 1Q19 4 19 9L15 6Z" fill="#ffb830"/></svg>
<svg class="a" style="left:650px;top:624px" width="19" height="16" viewBox="0 0 19 16"><rect x="0" y="0" width="19" height="16" fill="#c8101a"/><path d="M4 13Q7 8 9.5 2Q10.5 8 15 11Q10 10.5 4 13Z" fill="none" stroke="#fff" stroke-width="1.2"/></svg>
<svg class="a" style="left:690px;top:624px" width="20" height="17" viewBox="0 0 20 17"><rect x="1" y="1" width="18" height="4.5" fill="#a84aa8"/><rect x="1" y="6" width="18" height="4.5" fill="#2a4ab8"/><rect x="1" y="11" width="18" height="4.5" fill="#2a9a3a"/><path d="M1 1H4V16H1Z" fill="#ddd"/><path d="M9 0L12 16" stroke="#c89a4a" stroke-width="2"/></svg>
<svg class="a" style="left:730px;top:623px" width="21" height="21" viewBox="0 0 21 21"><defs><linearGradient id="kg" x1="0" y1="0" x2="0" y2="1"><stop offset="0" stop-color="#f6c0c4"/><stop offset=".45" stop-color="#f08080"/><stop offset=".5" stop-color="#ff1a1a"/><stop offset="1" stop-color="#e00000"/></linearGradient><linearGradient id="kg2" x1="0" y1="0" x2="0" y2="1"><stop offset="0" stop-color="#c8eede"/><stop offset="1" stop-color="#0a7a40"/></linearGradient></defs><path d="M0.5 0.5H6V8.5L14 0.5H20.5L9.5 11.5L0.5 20.5Z" fill="url(#kg)" stroke="#fff" stroke-width=".6"/><path d="M10.5 13.5L13 11L17 15V11H20.5V20.5H10.5V17H14.5Z" fill="url(#kg2)" stroke="#e8f8f0" stroke-width=".6"/></svg>
<svg class="a" style="left:771px;top:623px" width="21" height="21" viewBox="0 0 21 21"><circle cx="10.5" cy="10.5" r="9.8" fill="#db4437"/><path d="M10.5 10.5L1.6 6.3A9.8 9.8 0 0 0 8 20Z" fill="#0f9d58"/><path d="M10.5 10.5L8 20A9.8 9.8 0 0 0 19.6 6.3Z" fill="#f4c20d"/><circle cx="10.5" cy="10.5" r="4.5" fill="#fff"/><circle cx="10.5" cy="10.5" r="3.4" fill="#4285f4"/></svg>
<svg class="a" style="left:811px;top:624px" width="22" height="16" viewBox="0 0 22 16"><rect x="6" y="0" width="16" height="16" rx="1" fill="#21a366"/><rect x="14" y="0" width="8" height="8" fill="#33c481"/><rect x="6" y="8" width="16" height="8" fill="#107c41"/><rect x="0" y="3" width="11" height="11" rx="1" fill="#185c37"/><text x="5.5" y="12.3" text-anchor="middle" font-family="Liberation Sans" font-weight="bold" font-size="9" fill="#fff">X</text></svg>
<svg class="a" style="left:851px;top:623px" width="21" height="20" viewBox="0 0 21 20"><ellipse cx="9" cy="11" rx="8.5" ry="7" fill="#f0ece0"/><circle cx="5" cy="10" r="1.5" fill="#e04848"/><circle cx="8" cy="7" r="1.5" fill="#f0c040"/><circle cx="12" cy="8" r="1.5" fill="#48a848"/><circle cx="7" cy="13.5" r="1.5" fill="#4848e0"/><path d="M19 1L11 17" stroke="#d8a048" stroke-width="2"/></svg>
<svg class="a" style="left:891px;top:624px" width="22" height="16" viewBox="0 0 22 16"><rect x="6" y="0" width="16" height="16" rx="1" fill="#2b7cd3"/><rect x="6" y="0" width="16" height="5" fill="#41a5ee"/><rect x="6" y="11" width="16" height="5" fill="#185abd"/><rect x="0" y="3" width="11" height="11" rx="1" fill="#185abd"/><text x="5.5" y="12.3" text-anchor="middle" font-family="Liberation Sans" font-weight="bold" font-size="8.5" fill="#fff">W</text></svg>
<svg class="a" style="left:932px;top:624px" width="20" height="19" viewBox="0 0 20 19"><defs><radialGradient id="rg" cx=".4" cy=".3" r=".8"><stop offset="0" stop-color="#8ec4f4"/><stop offset="1" stop-color="#1a56b8"/></radialGradient></defs><circle cx="10" cy="9.5" r="9.3" fill="url(#rg)"/><text x="10" y="13.5" text-anchor="middle" font-family="Liberation Serif" font-weight="bold" font-size="11" fill="#fff">R</text></svg>
<svg class="a" style="left:971px;top:623px" width="21" height="21" viewBox="0 0 21 21"><circle cx="10" cy="10.5" r="8.6" fill="#1a8ad0" stroke="#fff" stroke-width="1.4"/><text x="10" y="15" text-anchor="middle" font-family="Liberation Sans" font-weight="bold" font-size="13" fill="#fff">?</text><circle cx="16.5" cy="16" r="4" fill="#e0202a"/><rect x="16" y="13.5" width="1.2" height="3.2" fill="#fff"/></svg>
<svg class="a" style="left:1000px;top:629px" width="12" height="7" viewBox="0 0 12 7"><path d="M0.8 6.5L6 1.2L11.2 6.5" fill="none" stroke="#fff" stroke-width="1.2"/></svg>
<svg class="a" style="left:1018px;top:626px" width="16" height="15" viewBox="0 0 16 15"><path d="M1 7.5H15M6 2L8.5 7.5L6 13M3 5V10M11 6V9" fill="none" stroke="#fff" stroke-width="1.3"/></svg>
<svg class="a" style="left:1038px;top:626px" width="16" height="15" viewBox="0 0 16 15"><path d="M1 5H4L8 1.5V13.5L4 10H1Z" fill="none" stroke="#fff" stroke-width="1.1"/><path d="M10 5Q11.5 7.5 10 10M12 3.5Q14.5 7.5 12 11.5" fill="none" stroke="#fff" stroke-width="1.1"/></svg>
<svg class="a" style="left:1062px;top:625px" width="16" height="16" viewBox="0 0 16 16"><path d="M3 14L12 3Q14 2 14 4L5 14Q3 15 3 14Z" fill="none" stroke="#fff" stroke-width="1.1"/><path d="M1 10Q4 7 6 10" fill="none" stroke="#fff" stroke-width="1"/></svg>
<div class="t" style="left:798px;width:600px;text-align:center;top:621.45px;font-size:10.3px;color:#fff;letter-spacing:-0.3px">ENG</div>
<div class="t" style="left:798px;width:600px;text-align:center;top:635.45px;font-size:10.3px;color:#fff;letter-spacing:-0.3px">IN</div>
<div class="t" style="left:843.2px;width:600px;text-align:center;top:621.35px;font-size:10.5px;color:#fff;letter-spacing:-0.4px">18:30</div>
<div class="t" style="left:843.2px;width:600px;text-align:center;top:635.35px;font-size:10.5px;color:#fff;letter-spacing:-0.4px">29-06-2020</div>
<svg class="a" style="left:1181px;top:626px" width="20" height="20" viewBox="0 0 20 20"><path d="M1.5 1.5H15.5V11.5H7L4 14.5V11.5H1.5Z" fill="#fff"/><path d="M4 4.5H13M4 7H13M4 9.5H11" stroke="#3c3f45" stroke-width="1"/><circle cx="14.5" cy="14" r="5.3" fill="#3c3f45" stroke="#ddd" stroke-width="1"/><text x="14.7" y="17.5" text-anchor="middle" font-family="Liberation Sans" font-size="9" fill="#fff">1</text></svg>
<div class="a" style="left:1147px;top:651px;width:133px;height:69px;background:#38343f"></div>
<div class="a" style="left:1196px;top:668px;width:35px;height:35px;border-radius:50%;background:#f0d4d6"></div>
<div class="t" style="left:913.5px;width:600px;text-align:center;top:679.50px;font-size:13px;color:#2a1418;-webkit-text-stroke:0.5px #2a1418">TA</div>
<div class="t" style="left:880.4000000000001px;width:600px;text-align:center;top:708.30px;font-size:7.4px;color:#eee;">Tanweer Ahmed</div>
</body></html>
